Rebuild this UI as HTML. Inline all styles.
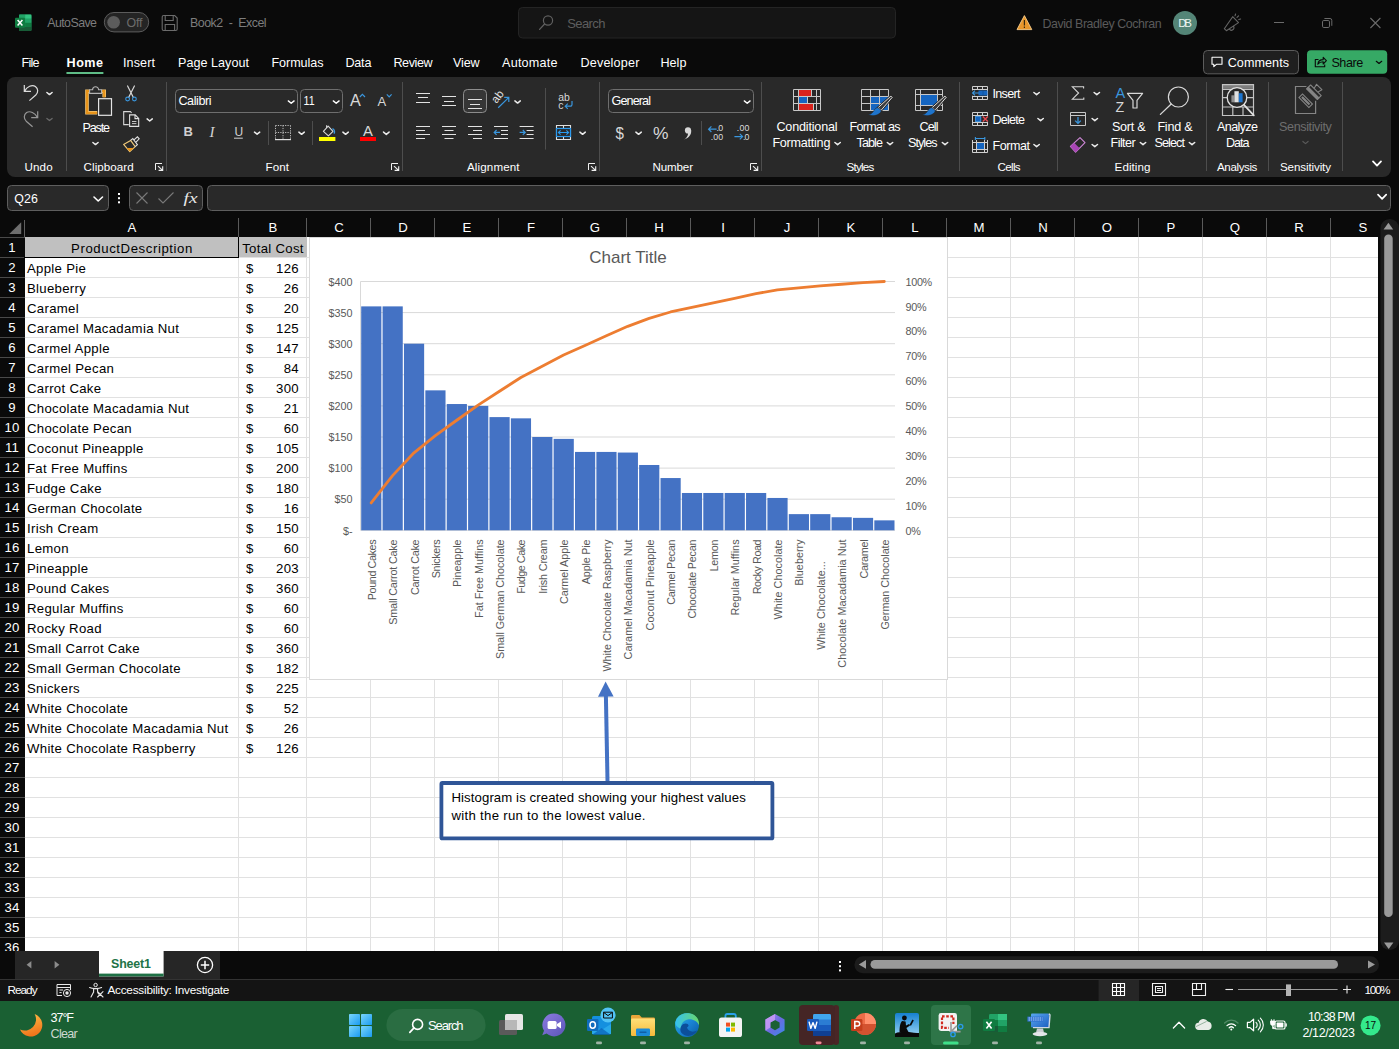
<!DOCTYPE html>
<html lang="en">
<head>
<meta charset="utf-8">
<title>Book2 - Excel</title>
<style>
*{box-sizing:border-box;margin:0;padding:0}
html,body{width:1399px;height:1049px;overflow:hidden;background:#0a0a0a}
body{font-family:"Liberation Sans",sans-serif;font-size:12px;color:#fff;position:relative}
.abs{position:absolute}
.t{position:absolute;white-space:nowrap;line-height:1}
svg{position:absolute;overflow:visible}
#titlebar{position:absolute;left:0;top:0;width:1399px;height:46px;background:#0a0a0a}
#tabs{position:absolute;left:0;top:46px;width:1399px;height:31px}
#ribbon{position:absolute;left:7px;top:77px;width:1384px;height:100px;background:#292929;border-radius:8px}
.rt{position:absolute;white-space:nowrap;line-height:1;font-size:12.4px;color:#fff}
.gl{position:absolute;white-space:nowrap;line-height:1;font-size:11.8px;color:#f0f0f0}
.sep{position:absolute;width:1px;background:#4a4a4a}
#sheet{position:absolute;left:0;top:218px;width:1378px;height:733px;background:#fff;overflow:hidden}
.ch{position:absolute;top:0;height:19px;color:#fff;font-size:13.2px;text-align:center;line-height:19px}
.rh{position:absolute;left:0;width:24px;height:20px;color:#fff;font-size:13.2px;text-align:center;line-height:20px;letter-spacing:0.2px}
.c{position:absolute;white-space:nowrap;color:#000;font-size:13.2px;line-height:20px;height:20px;letter-spacing:0.3px}
</style>
</head>
<body>
<svg style="left:0;top:0" width="1399" height="218" viewBox="0 0 1399 218" font-family="Liberation Sans, sans-serif">
<g><rect x="19" y="14.6" width="12.4" height="16.4" rx="1.4" fill="#21a366"/><rect x="19" y="14.6" width="6.2" height="4.1" fill="#21a366"/><rect x="25.2" y="14.6" width="6.2" height="4.1" fill="#33c481"/><rect x="19" y="18.7" width="6.2" height="4.1" fill="#107c41"/><rect x="25.2" y="18.7" width="6.2" height="4.1" fill="#21a366"/><rect x="19" y="22.8" width="6.2" height="4.1" fill="#185c37"/><rect x="25.2" y="22.8" width="6.2" height="4.1" fill="#107c41"/><rect x="19" y="26.9" width="12.4" height="4.1" fill="#185c37"/><rect x="15" y="17.8" width="10" height="10" rx="1" fill="#107c41"/><path d="M17.6 20 L22.4 25.6 M22.4 20 L17.6 25.6" stroke="#fff" stroke-width="1.5"/></g>
<text x="47.2" y="27.0" font-size="12.4" fill="#7d7d7d" textLength="49.8" lengthAdjust="spacing">AutoSave</text>
<rect x="104.3" y="12.5" width="44.4" height="19.4" fill="#242424" stroke="#5c5c5c" stroke-width="1" rx="9.7"/>
<circle cx="113.6" cy="22.3" r="6.3" fill="#5c5c5c"/>
<text x="126.4" y="26.8" font-size="12.4" fill="#6c6c6c" textLength="16.0" lengthAdjust="spacing">Off</text>
<path d="M162.2 17 a1.5 1.5 0 0 1 1.5 -1.5 h11 l2.5 2.5 v11 a1.5 1.5 0 0 1 -1.5 1.5 h-12 a1.5 1.5 0 0 1 -1.5 -1.5 z M165.2 15.5 v5 h8 v-5 M165.2 30.5 v-6 h9.4 v6" fill="none" stroke="#6c6c6c" stroke-width="1.1"/>
<text x="190.0" y="27.0" font-size="12.4" fill="#7d7d7d" textLength="76.6" lengthAdjust="spacing">Book2 &#160;-&#160; Excel</text>
<rect x="518.5" y="7.5" width="377" height="30.5" fill="#151515" stroke="#242424" stroke-width="1" rx="4"/>
<circle cx="548" cy="20.5" r="4.6" fill="none" stroke="#606060" stroke-width="1.2"/><path d="M544.6 24 L539.6 29.4" stroke="#606060" stroke-width="1.3" stroke-linecap="round"/>
<text x="567.2" y="27.6" font-size="13" fill="#5e5e5e" textLength="38.2" lengthAdjust="spacing">Search</text>
<path d="M1024.4 15.6 L1031.8 29.6 H1017 Z" fill="#e9972b" stroke="#f6cd8c" stroke-width="0.9" stroke-linejoin="round"/><path d="M1024.4 20 V25.4 M1024.4 26.6 V27.9" stroke="#3a2a10" stroke-width="1.2"/>
<text x="1042.4" y="27.8" font-size="12.4" fill="#5a5a5a" textLength="119.2" lengthAdjust="spacing">David Bradley Cochran</text>
<circle cx="1185" cy="23" r="12" fill="#548577"/>
<text x="1178.2" y="27.0" font-size="11.5" fill="#e8f4ee" textLength="13.6" lengthAdjust="spacing">DB</text>
<path d="M1224.3 28.7 L1232.7 16.7 L1238.5 22.6 L1226.4 30.7 Z M1229.4 29 a2.3 2.3 0 0 0 4.2 -2.6 M1235 15.8 l0.6 -1.8 M1237 17.4 l1.6 -1.6 M1238.8 19.6 l1.8 -0.6" fill="none" stroke="#666" stroke-width="1.1" stroke-linejoin="round" stroke-linecap="round"/>
<line x1="1274" y1="22.5" x2="1284" y2="22.5" stroke="#6a6a6a" stroke-width="1" stroke-linecap="butt"/>
<rect x="1322.5" y="20.5" width="7" height="7" rx="1.3" fill="none" stroke="#6a6a6a" stroke-width="1"/><path d="M1324.4 18.5 H1330 a1.8 1.8 0 0 1 1.8 1.8 V25.8" fill="none" stroke="#6a6a6a" stroke-width="1"/>
<path d="M1370.4 18 L1380.4 28 M1380.4 18 L1370.4 28" stroke="#6a6a6a" stroke-width="1.1"/>
<text x="21.4" y="67.0" font-size="12.6" fill="#fff" textLength="18.2" lengthAdjust="spacing">File</text>
<text x="123.0" y="67.0" font-size="12.6" fill="#fff" textLength="32.0" lengthAdjust="spacing">Insert</text>
<text x="178.0" y="67.0" font-size="12.6" fill="#fff" textLength="71.0" lengthAdjust="spacing">Page Layout</text>
<text x="271.4" y="67.0" font-size="12.6" fill="#fff" textLength="52.2" lengthAdjust="spacing">Formulas</text>
<text x="345.4" y="67.0" font-size="12.6" fill="#fff" textLength="26.0" lengthAdjust="spacing">Data</text>
<text x="393.4" y="67.0" font-size="12.6" fill="#fff" textLength="39.2" lengthAdjust="spacing">Review</text>
<text x="453.0" y="67.0" font-size="12.6" fill="#fff" textLength="26.6" lengthAdjust="spacing">View</text>
<text x="502.0" y="67.0" font-size="12.6" fill="#fff" textLength="55.6" lengthAdjust="spacing">Automate</text>
<text x="580.4" y="67.0" font-size="12.6" fill="#fff" textLength="59.0" lengthAdjust="spacing">Developer</text>
<text x="660.4" y="67.0" font-size="12.6" fill="#fff" textLength="26.0" lengthAdjust="spacing">Help</text>
<text x="66.6" y="67.0" font-size="12.6" fill="#fff" textLength="36.4" lengthAdjust="spacing" font-weight="bold">Home</text>
<rect x="66.2" y="72" width="37.4" height="2" fill="#5fbd87" rx="1"/>
<rect x="1203.5" y="50.5" width="95" height="23.3" fill="#1f1f1f" stroke="#5c5c5c" stroke-width="1" rx="4"/>
<path d="M1212 57.3 h10 v7 h-5.6 l-2.6 2.4 v-2.4 h-1.8 z" fill="none" stroke="#fff" stroke-width="1.1" stroke-linejoin="round"/>
<text x="1227.7" y="66.8" font-size="12.6" fill="#fff" textLength="61.3" lengthAdjust="spacing">Comments</text>
<rect x="1307" y="50.3" width="80.2" height="23.5" fill="#36a965" rx="4"/>
<path d="M1318.5 59.5 h-3.2 v7.3 h9.4 v-2.4 M1317.8 64.2 c0.4 -3 2.6 -4.6 5.4 -4.6 v-2.2 l3.2 3.3 l-3.2 3.3 v-2.2 c-2.2 0 -4 0.6 -5.4 2.4 z" fill="none" stroke="#0a0a0a" stroke-width="1.1" stroke-linejoin="round"/>
<text x="1331.4" y="66.8" font-size="12.6" fill="#0a0a0a" textLength="31.9" lengthAdjust="spacing">Share</text>
<path d="M1376.3 61.3 L1379.0 63.5 L1381.7 61.3" fill="none" stroke="#0a0a0a" stroke-width="1.2" stroke-linecap="round" stroke-linejoin="round"/>
<rect x="7" y="77" width="1384" height="100" fill="#292929" rx="8"/>
<path d="M24.3 85 V91.4 H31 M24.6 91.2 C27 86.6 32 84.2 35.4 86.4 C38.4 88.6 38.4 92.4 35.8 95 L29.4 100.6" fill="none" stroke="#dcdcdc" stroke-width="1.2" stroke-linecap="butt" stroke-linejoin="miter"/>
<path d="M46.9 92.5 L49.5 94.6 L52.1 92.5" fill="none" stroke="#ececec" stroke-width="1.5" stroke-linecap="round" stroke-linejoin="round"/>
<path d="M37.7 111.2 V117.7 H31.2 M37.4 117.4 C35 112.8 30 110.4 26.6 112.6 C23.6 114.8 23.6 118.6 26.2 121.2 L32.6 126.8" fill="none" stroke="#969696" stroke-width="1.2" stroke-linecap="butt" stroke-linejoin="miter"/>
<path d="M46.9 118.5 L49.5 120.6 L52.1 118.5" fill="none" stroke="#6a6a6a" stroke-width="1.3" stroke-linecap="round" stroke-linejoin="round"/>
<text x="24.4" y="171.0" font-size="11.6" fill="#fff" textLength="28.2" lengthAdjust="spacing">Undo</text>
<line x1="66.5" y1="82" x2="66.5" y2="171" stroke="#4d4d4d" stroke-width="1" stroke-linecap="butt"/>
<path d="M90 91.2 H87 V112.8 H97.2 M101.4 91.2 H104.2 V97.2" fill="none" stroke="#f6c878" stroke-width="3.6"/><path d="M90 91.2 H87 V112.8 H97.2 M101.4 91.2 H104.2 V97.2" fill="none" stroke="#e8941a" stroke-width="2.2"/>
<path d="M89.6 93.4 V89.8 H92.6 a3 3 0 0 1 6 0 H101.6 V93.4 Z" fill="#292929" stroke="#b4b4b4" stroke-width="1.1"/>
<rect x="98.6" y="98.7" width="12.9" height="16.6" fill="#292929" stroke="#e4e4e4" stroke-width="1.2"/>
<text x="82.4" y="132.0" font-size="12.6" fill="#fff" textLength="27.6" lengthAdjust="spacing">Paste</text>
<path d="M92.9 142.5 L95.5 144.6 L98.1 142.5" fill="none" stroke="#ececec" stroke-width="1.5" stroke-linecap="round" stroke-linejoin="round"/>
<path d="M127.6 86 L133.4 97.4 M134.4 86 L128.6 97.4" stroke="#d8d8d8" stroke-width="1.2" stroke-linecap="round"/><circle cx="127.6" cy="99" r="1.9" fill="none" stroke="#3a96dd" stroke-width="1.1"/><circle cx="134.4" cy="99" r="1.9" fill="none" stroke="#3a96dd" stroke-width="1.1"/>
<path d="M128.8 124.6 H123.7 V111.6 H130.4 L131.6 112.8" fill="none" stroke="#d8d8d8" stroke-width="1.1"/><path d="M129.6 114.9 H135.2 L138.7 118.4 V126.4 H129.6 Z M135 115 V118.6 H138.6" fill="none" stroke="#e0e0e0" stroke-width="1.1"/><path d="M132 121.5 H136.4 M132 123.6 H136.4" stroke="#d8d8d8" stroke-width="0.9"/>
<path d="M147.1 118.9 L149.7 121.0 L152.3 118.9" fill="none" stroke="#ececec" stroke-width="1.5" stroke-linecap="round" stroke-linejoin="round"/>
<path d="M123.6 144.4 L130.6 140.4 L135.2 146.6 L129.8 151.6 Z" fill="none" stroke="#f2cb7a" stroke-width="1.1" stroke-linejoin="round"/><path d="M126.6 148 L133.8 148 L129.8 151.4 Z" fill="#e8941a"/>
<path d="M130.6 140.4 L132.8 138.6 L137.4 144.6 L135.2 146.6" fill="none" stroke="#e0e0e0" stroke-width="1.1"/><path d="M134 139.8 L137.4 136.8 L139.2 138.8 L136 142.2" fill="none" stroke="#e0e0e0" stroke-width="1.1"/>
<text x="83.6" y="171.0" font-size="11.6" fill="#fff" textLength="50.0" lengthAdjust="spacing">Clipboard</text>
<path d="M155.5 170 V163.5 H162" fill="none" stroke="#f0f0f0" stroke-width="1"/><path d="M158 166.2 L162.4 170.2 M158.6 170.4 H162.7 V166.2" fill="none" stroke="#f0f0f0" stroke-width="1.1"/>
<line x1="166.5" y1="82" x2="166.5" y2="171" stroke="#4d4d4d" stroke-width="1" stroke-linecap="butt"/>
<rect x="175.5" y="89.5" width="122" height="23" fill="#292929" stroke="#6e6e6e" stroke-width="1" rx="4"/>
<text x="178.4" y="105.0" font-size="12.6" fill="#fff" textLength="33.2" lengthAdjust="spacing">Calibri</text>
<path d="M288.3 100.9 L291.2 103.3 L294.1 100.9" fill="none" stroke="#fff" stroke-width="1.4" stroke-linecap="round" stroke-linejoin="round"/>
<rect x="300.5" y="89.5" width="42" height="23" fill="#292929" stroke="#6e6e6e" stroke-width="1" rx="4"/>
<text x="303.6" y="105" font-size="12.6" fill="#fff" textLength="11" lengthAdjust="spacingAndGlyphs">11</text>
<path d="M333.3 100.9 L336.2 103.3 L339.1 100.9" fill="none" stroke="#fff" stroke-width="1.4" stroke-linecap="round" stroke-linejoin="round"/>
<text x="350.0" y="105.6" font-size="16.2" fill="#d8d8d8" textLength="11.0" lengthAdjust="spacing">A</text>
<path d="M359.8 97 L362.4 94.4 L365 97" fill="none" stroke="#3a96dd" stroke-width="1.2"/>
<text x="377.6" y="105.6" font-size="13" fill="#d8d8d8" textLength="9.4" lengthAdjust="spacing">A</text>
<path d="M386.8 94.4 L389.2 96.8 L391.6 94.4" fill="none" stroke="#3a96dd" stroke-width="1.2"/>
<text x="183.4" y="136.4" font-size="13" fill="#d0d0d0" textLength="7.6" lengthAdjust="spacing" font-weight="bold">B</text>
<text x="209.4" y="136.6" font-size="15" font-style="italic" font-family="Liberation Serif, serif" fill="#d4d4d4">I</text>
<text x="234.6" y="135.6" font-size="12" fill="#d0d0d0" textLength="7.8" lengthAdjust="spacing">U</text>
<line x1="234" y1="138.2" x2="242.8" y2="138.2" stroke="#d0d0d0" stroke-width="1" stroke-linecap="butt"/>
<path d="M254.5 132.1 L257.1 134.2 L259.7 132.1" fill="none" stroke="#ececec" stroke-width="1.5" stroke-linecap="round" stroke-linejoin="round"/>
<line x1="268.5" y1="121" x2="268.5" y2="145" stroke="#4d4d4d" stroke-width="1" stroke-linecap="butt"/>
<path d="M275.5 125.5 H290.5 M275.5 125.5 V139 M290.5 125.5 V139 M283 125.5 V139 M275.5 132.5 H290.5" fill="none" stroke="#bdbdbd" stroke-width="1" stroke-dasharray="1.2 1.2"/>
<line x1="275" y1="139.6" x2="291" y2="139.6" stroke="#e0e0e0" stroke-width="1.2" stroke-linecap="butt"/>
<path d="M298.9 132.1 L301.6 134.3 L304.3 132.1" fill="none" stroke="#ececec" stroke-width="1.5" stroke-linecap="round" stroke-linejoin="round"/>
<line x1="312.5" y1="121" x2="312.5" y2="145" stroke="#4d4d4d" stroke-width="1" stroke-linecap="butt"/>
<path d="M323.4 131.4 L328.2 126.2 L333 131.4 L328.4 135.8 Z M326.6 127.6 V125.2" fill="none" stroke="#d8d8d8" stroke-width="1.1" stroke-linejoin="round"/><path d="M332.4 128.6 C334.6 129.6 335 132 334 133.6" fill="none" stroke="#3a96dd" stroke-width="1.4"/>
<rect x="319" y="137" width="16.4" height="4" fill="#ffff00"/>
<path d="M342.9 132.1 L345.6 134.3 L348.3 132.1" fill="none" stroke="#ececec" stroke-width="1.5" stroke-linecap="round" stroke-linejoin="round"/>
<text x="363.0" y="136.0" font-size="14.8" fill="#d8d8d8" textLength="10.0" lengthAdjust="spacing">A</text>
<rect x="360" y="137" width="16" height="4" fill="#ff0000"/>
<path d="M383.5 132.1 L386.3 134.4 L389.1 132.1" fill="none" stroke="#ececec" stroke-width="1.5" stroke-linecap="round" stroke-linejoin="round"/>
<text x="265.6" y="171.0" font-size="11.6" fill="#fff" textLength="23.4" lengthAdjust="spacing">Font</text>
<path d="M391.5 170 V163.5 H398" fill="none" stroke="#f0f0f0" stroke-width="1"/><path d="M394 166.2 L398.4 170.2 M394.6 170.4 H398.7 V166.2" fill="none" stroke="#f0f0f0" stroke-width="1.1"/>
<line x1="402.5" y1="82" x2="402.5" y2="171" stroke="#4d4d4d" stroke-width="1" stroke-linecap="butt"/>
<line x1="416" y1="93.5" x2="430" y2="93.5" stroke="#e2e2e2" stroke-width="1" stroke-linecap="butt"/>
<line x1="418" y1="97.5" x2="428" y2="97.5" stroke="#e2e2e2" stroke-width="1" stroke-linecap="butt"/>
<line x1="416" y1="102.5" x2="430" y2="102.5" stroke="#e2e2e2" stroke-width="1" stroke-linecap="butt"/>
<line x1="442" y1="96.5" x2="456" y2="96.5" stroke="#e2e2e2" stroke-width="1" stroke-linecap="butt"/>
<line x1="444" y1="101.5" x2="454" y2="101.5" stroke="#e2e2e2" stroke-width="1" stroke-linecap="butt"/>
<line x1="442" y1="105.5" x2="456" y2="105.5" stroke="#e2e2e2" stroke-width="1" stroke-linecap="butt"/>
<rect x="463.5" y="89.5" width="23" height="23" fill="#363636" stroke="#8c8c8c" stroke-width="1" rx="4"/>
<line x1="468" y1="99.5" x2="482" y2="99.5" stroke="#e2e2e2" stroke-width="1" stroke-linecap="butt"/>
<line x1="470" y1="104.5" x2="480" y2="104.5" stroke="#e2e2e2" stroke-width="1" stroke-linecap="butt"/>
<line x1="468" y1="108.5" x2="482" y2="108.5" stroke="#e2e2e2" stroke-width="1" stroke-linecap="butt"/>
<text transform="translate(496.6 104) rotate(-52)" font-size="11.4" fill="#e0e0e0">ab</text>
<path d="M498.2 107.8 L508.6 97.6 M504.2 97.4 H508.8 V102" fill="none" stroke="#3a96dd" stroke-width="1.2"/>
<path d="M514.9 100.9 L517.6 103.1 L520.3 100.9" fill="none" stroke="#ececec" stroke-width="1.5" stroke-linecap="round" stroke-linejoin="round"/>
<line x1="416" y1="126.5" x2="430" y2="126.5" stroke="#e2e2e2" stroke-width="1" stroke-linecap="butt"/>
<line x1="416" y1="130.5" x2="425" y2="130.5" stroke="#e2e2e2" stroke-width="1" stroke-linecap="butt"/>
<line x1="416" y1="134.5" x2="430" y2="134.5" stroke="#e2e2e2" stroke-width="1" stroke-linecap="butt"/>
<line x1="416" y1="138.5" x2="425" y2="138.5" stroke="#e2e2e2" stroke-width="1" stroke-linecap="butt"/>
<line x1="442" y1="126.5" x2="456" y2="126.5" stroke="#e2e2e2" stroke-width="1" stroke-linecap="butt"/>
<line x1="444.5" y1="130.5" x2="453.5" y2="130.5" stroke="#e2e2e2" stroke-width="1" stroke-linecap="butt"/>
<line x1="442" y1="134.5" x2="456" y2="134.5" stroke="#e2e2e2" stroke-width="1" stroke-linecap="butt"/>
<line x1="444.5" y1="138.5" x2="453.5" y2="138.5" stroke="#e2e2e2" stroke-width="1" stroke-linecap="butt"/>
<line x1="468" y1="126.5" x2="482" y2="126.5" stroke="#e2e2e2" stroke-width="1" stroke-linecap="butt"/>
<line x1="473" y1="130.5" x2="482" y2="130.5" stroke="#e2e2e2" stroke-width="1" stroke-linecap="butt"/>
<line x1="468" y1="134.5" x2="482" y2="134.5" stroke="#e2e2e2" stroke-width="1" stroke-linecap="butt"/>
<line x1="473" y1="138.5" x2="482" y2="138.5" stroke="#e2e2e2" stroke-width="1" stroke-linecap="butt"/>
<line x1="494" y1="126.5" x2="508" y2="126.5" stroke="#e2e2e2" stroke-width="1" stroke-linecap="butt"/>
<line x1="501" y1="130.5" x2="508" y2="130.5" stroke="#e2e2e2" stroke-width="1" stroke-linecap="butt"/>
<line x1="501" y1="134.5" x2="508" y2="134.5" stroke="#e2e2e2" stroke-width="1" stroke-linecap="butt"/>
<line x1="494" y1="138.5" x2="508" y2="138.5" stroke="#e2e2e2" stroke-width="1" stroke-linecap="butt"/>
<path d="M494.4 132.4 H500 M496.6 130 L494.2 132.4 L496.6 134.8" fill="none" stroke="#3a96dd" stroke-width="1.2"/>
<line x1="519.6" y1="126.5" x2="533.6" y2="126.5" stroke="#e2e2e2" stroke-width="1" stroke-linecap="butt"/>
<line x1="526.6" y1="130.5" x2="533.6" y2="130.5" stroke="#e2e2e2" stroke-width="1" stroke-linecap="butt"/>
<line x1="526.6" y1="134.5" x2="533.6" y2="134.5" stroke="#e2e2e2" stroke-width="1" stroke-linecap="butt"/>
<line x1="519.6" y1="138.5" x2="533.6" y2="138.5" stroke="#e2e2e2" stroke-width="1" stroke-linecap="butt"/>
<path d="M519.6 132.4 H525.2 M522.8 130 L525.2 132.4 L522.8 134.8" fill="none" stroke="#3a96dd" stroke-width="1.2"/>
<line x1="545.5" y1="88" x2="545.5" y2="149.6" stroke="#4d4d4d" stroke-width="1" stroke-linecap="butt"/>
<text x="558.2" y="101" font-size="10.4" fill="#d8d8d8" textLength="11.6" lengthAdjust="spacingAndGlyphs">ab</text>
<text x="558.2" y="108.8" font-size="10.4" fill="#d8d8d8">c</text>
<path d="M572 101 V104.6 a1.6 1.6 0 0 1 -1.6 1.6 H565.4 M567.8 103.6 L565.2 106.2 L567.8 108.8" fill="none" stroke="#3a96dd" stroke-width="1.2"/>
<path d="M556.5 125.5 H570.5 V139.5 H556.5 Z M563.5 125.5 V128.5 M563.5 136.5 V139.5" fill="none" stroke="#e0e0e0" stroke-width="1.1"/>
<rect x="556.5" y="128.5" width="14" height="8" fill="#292929" stroke="#2b9bf0" stroke-width="1.2"/>
<path d="M558.6 132.5 H568.4 M560.6 130.4 L558.4 132.5 L560.6 134.6 M566.4 130.4 L568.6 132.5 L566.4 134.6" fill="none" stroke="#2b9bf0" stroke-width="1.1"/>
<path d="M579.9 132.1 L582.6 134.3 L585.3 132.1" fill="none" stroke="#ececec" stroke-width="1.5" stroke-linecap="round" stroke-linejoin="round"/>
<text x="467.0" y="171.0" font-size="11.6" fill="#fff" textLength="52.6" lengthAdjust="spacing">Alignment</text>
<path d="M588.5 170 V163.5 H595" fill="none" stroke="#f0f0f0" stroke-width="1"/><path d="M591 166.2 L595.4 170.2 M591.6 170.4 H595.7 V166.2" fill="none" stroke="#f0f0f0" stroke-width="1.1"/>
<line x1="599.5" y1="82" x2="599.5" y2="171" stroke="#4d4d4d" stroke-width="1" stroke-linecap="butt"/>
<rect x="608.5" y="89.5" width="145" height="23" fill="#292929" stroke="#6e6e6e" stroke-width="1" rx="4"/>
<text x="611.6" y="105.0" font-size="12.6" fill="#fff" textLength="39.4" lengthAdjust="spacing">General</text>
<path d="M744.3 100.9 L747.2 103.3 L750.1 100.9" fill="none" stroke="#fff" stroke-width="1.4" stroke-linecap="round" stroke-linejoin="round"/>
<text x="615.4" y="139" font-size="17" fill="#d8d8d8" textLength="8.4" lengthAdjust="spacingAndGlyphs">$</text>
<path d="M635.9 132.1 L638.6 134.3 L641.3 132.1" fill="none" stroke="#ececec" stroke-width="1.5" stroke-linecap="round" stroke-linejoin="round"/>
<text x="653.0" y="138.8" font-size="17.4" fill="#d8d8d8" textLength="15.4" lengthAdjust="spacing">%</text>
<circle cx="688" cy="130.4" r="3.1" fill="#d8d8d8"/><path d="M691.1 130 C691.8 134.6 689 137.8 684.2 139.6 C686.8 137.6 688.2 135.6 688 133.2 Z" fill="#d8d8d8"/>
<line x1="701.5" y1="121" x2="701.5" y2="145" stroke="#4d4d4d" stroke-width="1" stroke-linecap="butt"/>
<text x="716.4" y="131.0" font-size="8.8" fill="#dcdcdc" textLength="6.8" lengthAdjust="spacing">.0</text>
<text x="710.8" y="140.0" font-size="8.8" fill="#dcdcdc" textLength="12.4" lengthAdjust="spacing">.00</text>
<path d="M708.6 129.2 H716.6 M711.4 126.4 L708.6 129.2 L711.4 132" fill="none" stroke="#3a96dd" stroke-width="1.2"/>
<text x="736.8" y="131.0" font-size="8.8" fill="#dcdcdc" textLength="12.6" lengthAdjust="spacing">.00</text>
<text x="743.0" y="140.0" font-size="8.8" fill="#dcdcdc" textLength="6.4" lengthAdjust="spacing">.0</text>
<path d="M734.4 136.6 H742.6 M739.8 133.8 L742.6 136.6 L739.8 139.4" fill="none" stroke="#3a96dd" stroke-width="1.2"/>
<text x="652.4" y="171.0" font-size="11.6" fill="#fff" textLength="40.6" lengthAdjust="spacing">Number</text>
<path d="M750.5 170 V163.5 H757" fill="none" stroke="#f0f0f0" stroke-width="1"/><path d="M753 166.2 L757.4 170.2 M753.6 170.4 H757.7 V166.2" fill="none" stroke="#f0f0f0" stroke-width="1.1"/>
<line x1="761.5" y1="82" x2="761.5" y2="171" stroke="#4d4d4d" stroke-width="1" stroke-linecap="butt"/>
<rect x="798.5" y="89.5" width="13" height="7" fill="#d9231c"/>
<rect x="798.5" y="96.5" width="9" height="7" fill="#1565c0"/>
<rect x="798.5" y="103.5" width="15" height="7" fill="#d9231c"/>
<path d="M793.5 89.5 H820.5 V110.5 H793.5 Z M793.5 96.5 H820.5 M793.5 103.5 H820.5 M798.5 89.5 V110.5 M811.5 89.5 V96.5 M807.5 96.5 V103.5 M813.5 103.5 V110.5 M816.5 89.5 V110.5" fill="none" stroke="#c8c8c8" stroke-width="1"/>
<text x="776.4" y="131.0" font-size="12.6" fill="#fff" textLength="61.2" lengthAdjust="spacing">Conditional</text>
<text x="772.4" y="147.0" font-size="12.6" fill="#fff" textLength="58.0" lengthAdjust="spacing">Formatting</text>
<path d="M834.9 142.5 L837.6 144.7 L840.3 142.5" fill="none" stroke="#ececec" stroke-width="1.5" stroke-linecap="round" stroke-linejoin="round"/>
<rect x="870.5" y="96.5" width="18.5" height="14" fill="#1565c0"/>
<path d="M861.5 89.5 H888.5 V110.5 H861.5 Z M861.5 96.5 H888.5 M861.5 103.5 H888.5 M870.5 89.5 V110.5 M879.5 89.5 V110.5" fill="none" stroke="#c8c8c8" stroke-width="1"/>
<path d="M890.9 96.1 L892.2 97.4 L881 110.4 L878.2 107.6 Z" fill="#292929" stroke="#292929" stroke-width="2.4" stroke-linejoin="round"/><path d="M890.9 96.1 L892.2 97.4 L881 110.4 L878.2 107.6 Z" fill="#3a3a3a" stroke="#dcdcdc" stroke-width="1" stroke-linejoin="round"/><path d="M877.8 107.4 C874.6 107.8 874 111.2 872 113 C871 114 869.6 114.4 868.4 114.2 C871.6 116.6 877.6 116 880.4 112.6 C881.4 111.2 881.4 110.4 881 110.2 Z" fill="#1e74cc" stroke="#292929" stroke-width="0.6"/>
<text x="849.4" y="131.0" font-size="12.6" fill="#fff" textLength="51.2" lengthAdjust="spacing">Format as</text>
<text x="856.6" y="147.0" font-size="12.6" fill="#fff" textLength="26.4" lengthAdjust="spacing">Table</text>
<path d="M887.3 142.5 L890.0 144.7 L892.7 142.5" fill="none" stroke="#ececec" stroke-width="1.5" stroke-linecap="round" stroke-linejoin="round"/>
<rect x="920.5" y="94.5" width="17" height="11" fill="#1565c0"/>
<path d="M915.5 89.5 H942.5 V110.5 H915.5 Z M915.5 94.5 H942.5 M915.5 105.5 H942.5 M920.5 89.5 V110.5 M937.5 89.5 V110.5" fill="none" stroke="#c8c8c8" stroke-width="1"/>
<path d="M944.9 96.1 L946.2 97.4 L935 110.4 L932.2 107.6 Z" fill="#292929" stroke="#292929" stroke-width="2.4" stroke-linejoin="round"/><path d="M944.9 96.1 L946.2 97.4 L935 110.4 L932.2 107.6 Z" fill="#3a3a3a" stroke="#dcdcdc" stroke-width="1" stroke-linejoin="round"/><path d="M931.8 107.4 C928.6 107.8 928 111.2 926 113 C925 114 923.6 114.4 922.4 114.2 C925.6 116.6 931.6 116 934.4 112.6 C935.4 111.2 935.4 110.4 935 110.2 Z" fill="#1e74cc" stroke="#292929" stroke-width="0.6"/>
<text x="919.4" y="131.0" font-size="12.6" fill="#fff" textLength="19.2" lengthAdjust="spacing">Cell</text>
<text x="908.0" y="147.0" font-size="12.6" fill="#fff" textLength="29.6" lengthAdjust="spacing">Styles</text>
<path d="M942.3 142.5 L945.0 144.7 L947.7 142.5" fill="none" stroke="#ececec" stroke-width="1.5" stroke-linecap="round" stroke-linejoin="round"/>
<text x="846.4" y="171.0" font-size="11.6" fill="#fff" textLength="28.0" lengthAdjust="spacing">Styles</text>
<line x1="959.5" y1="82" x2="959.5" y2="171" stroke="#4d4d4d" stroke-width="1" stroke-linecap="butt"/>
<path d="M972.5 86.5 H987.5 V99.5 H972.5 Z M972.5 89.5 H987.5 M972.5 96.5 H987.5 M977.5 86.5 V89.5 M982.5 86.5 V89.5 M977.5 96.5 V99.5 M982.5 96.5 V99.5" fill="none" stroke="#d0d0d0" stroke-width="1"/>
<rect x="971.6" y="90.4" width="6" height="5.4" fill="#292929"/>
<rect x="978.5" y="90.5" width="9" height="5" fill="#1565c0"/>
<line x1="983" y1="90.5" x2="983" y2="95.5" stroke="#0f4f94" stroke-width="0.8" stroke-linecap="butt"/>
<path d="M972.6 93 H979.4 M975 90.6 L972.6 93 L975 95.4" fill="none" stroke="#3a96dd" stroke-width="1.2"/>
<text x="992.4" y="98.0" font-size="12.6" fill="#fff" textLength="28.2" lengthAdjust="spacing">Insert</text>
<path d="M1033.9 92.5 L1036.6 94.7 L1039.3 92.5" fill="none" stroke="#ececec" stroke-width="1.5" stroke-linecap="round" stroke-linejoin="round"/>
<path d="M972.5 112.5 H987.5 V125.5 H972.5 Z M972.5 115.5 H987.5 M972.5 122.5 H987.5 M977.5 112.5 V115.5 M982.5 112.5 V115.5 M977.5 122.5 V125.5 M982.5 122.5 V125.5" fill="none" stroke="#d0d0d0" stroke-width="1"/>
<rect x="974.6" y="116.2" width="14" height="5.6" fill="#292929"/>
<rect x="975.6" y="116.6" width="5.2" height="4.9" fill="#1565c0" stroke="#4aa3ee" stroke-width="0.8"/>
<path d="M982.8 116.6 L987.8 121.6 M987.8 116.6 L982.8 121.6" stroke="#e8484f" stroke-width="1.4"/>
<text x="992.4" y="124.0" font-size="12.6" fill="#fff" textLength="32.6" lengthAdjust="spacing">Delete</text>
<path d="M1037.9 118.5 L1040.6 120.7 L1043.3 118.5" fill="none" stroke="#ececec" stroke-width="1.5" stroke-linecap="round" stroke-linejoin="round"/>
<path d="M972.5 140 V152.5 H987.5 V140 M972.5 142.5 H987.5 M972.5 149.5 H987.5 M976.5 140 V152.5 M984.5 140 V152.5" fill="none" stroke="#d0d0d0" stroke-width="1"/>
<rect x="977" y="143" width="7" height="6" fill="#1565c0"/>
<path d="M975.4 138.5 H984.8 M975.4 137 V140 M984.8 137 V140" fill="none" stroke="#3a96dd" stroke-width="1.1"/>
<text x="992.4" y="150.0" font-size="12.6" fill="#fff" textLength="37.6" lengthAdjust="spacing">Format</text>
<path d="M1033.9 144.5 L1036.6 146.7 L1039.3 144.5" fill="none" stroke="#ececec" stroke-width="1.5" stroke-linecap="round" stroke-linejoin="round"/>
<text x="997.6" y="171.0" font-size="11.6" fill="#fff" textLength="23.0" lengthAdjust="spacing">Cells</text>
<line x1="1057.5" y1="82" x2="1057.5" y2="171" stroke="#4d4d4d" stroke-width="1" stroke-linecap="butt"/>
<path d="M1083.6 88.6 V86.8 H1072.4 L1078.6 93 L1072.4 99.2 H1083.8 V97.4" fill="none" stroke="#d8d8d8" stroke-width="1.1" stroke-linejoin="miter"/>
<path d="M1094.1 92.5 L1096.8 94.7 L1099.5 92.5" fill="none" stroke="#ececec" stroke-width="1.5" stroke-linecap="round" stroke-linejoin="round"/>
<path d="M1070.5 112.5 H1085.5 V125.5 H1070.5 Z M1070.5 115.5 H1085.5" fill="none" stroke="#c8c8c8" stroke-width="1"/><path d="M1078 117 V123.4 M1075.2 120.6 L1078 123.4 L1080.8 120.6" fill="none" stroke="#3a96dd" stroke-width="1.3"/>
<path d="M1092.1 118.5 L1094.8 120.7 L1097.5 118.5" fill="none" stroke="#ececec" stroke-width="1.5" stroke-linecap="round" stroke-linejoin="round"/>
<path d="M1070.4 146.4 L1080 137.6 L1085 142.6 L1075.6 152.2 Z" fill="none" stroke="#cf87d8" stroke-width="1.1" stroke-linejoin="round"/><path d="M1070.4 146.4 L1074.2 142.8 L1079.6 148.2 L1075.6 152.2 Z" fill="#a945b5"/>
<path d="M1092.1 144.5 L1094.8 146.7 L1097.5 144.5" fill="none" stroke="#ececec" stroke-width="1.5" stroke-linecap="round" stroke-linejoin="round"/>
<text x="1115.4" y="98.4" font-size="14.6" fill="#3a96dd" textLength="9.6" lengthAdjust="spacing">A</text>
<text x="1115.6" y="112.4" font-size="14.2" fill="#d8d8d8" textLength="8.4" lengthAdjust="spacing">Z</text>
<path d="M1127.4 93.4 H1142.6 L1137 100.4 V108 H1133 V100.4 Z" fill="none" stroke="#d8d8d8" stroke-width="1.2" stroke-linejoin="round"/>
<text x="1112.0" y="131.0" font-size="12.6" fill="#fff" textLength="33.6" lengthAdjust="spacing">Sort &amp;</text>
<text x="1110.6" y="147.0" font-size="12.6" fill="#fff" textLength="25.0" lengthAdjust="spacing">Filter</text>
<path d="M1140.3 142.5 L1143.0 144.7 L1145.7 142.5" fill="none" stroke="#ececec" stroke-width="1.5" stroke-linecap="round" stroke-linejoin="round"/>
<circle cx="1178.4" cy="97" r="10" fill="none" stroke="#d8d8d8" stroke-width="1.2"/><path d="M1171.2 104 L1160.4 114.4" stroke="#d8d8d8" stroke-width="1.3" stroke-linecap="round"/>
<text x="1157.4" y="131.0" font-size="12.6" fill="#fff" textLength="35.2" lengthAdjust="spacing">Find &amp;</text>
<text x="1154.4" y="147.0" font-size="12.6" fill="#fff" textLength="30.6" lengthAdjust="spacing">Select</text>
<path d="M1189.3 142.5 L1192.0 144.7 L1194.7 142.5" fill="none" stroke="#ececec" stroke-width="1.5" stroke-linecap="round" stroke-linejoin="round"/>
<text x="1114.6" y="171.0" font-size="11.6" fill="#fff" textLength="35.8" lengthAdjust="spacing">Editing</text>
<line x1="1206.5" y1="82" x2="1206.5" y2="171" stroke="#4d4d4d" stroke-width="1" stroke-linecap="butt"/>
<rect x="1222.5" y="85" width="31" height="3.6" fill="#7e7e7e"/>
<path d="M1222.5 84.7 H1253.5 V115.5 H1222.5 Z M1222.5 89.3 H1253.5 M1222.5 97.7 H1253.5 M1222.5 107 H1253.5 M1232.8 107 V115.5 M1243 107 V115.5 M1232.8 89.3 V97.7 M1243 89.3 V97.7" fill="none" stroke="#c4c4c4" stroke-width="1.2"/>
<circle cx="1237" cy="97.5" r="9.8" fill="#292929" stroke="#e2e2e2" stroke-width="1.3"/>
<rect x="1231.4" y="95.3" width="3" height="7" fill="#8e8e8e"/>
<rect x="1234.4" y="91.2" width="4.4" height="11.1" fill="#e0e0e0"/>
<rect x="1238.8" y="93.2" width="3.8" height="9.1" fill="#1b75d0"/>
<path d="M1244 104.8 L1253.8 115.4" stroke="#e2e2e2" stroke-width="1.7" stroke-linecap="round"/>
<text x="1217.0" y="131.0" font-size="12.6" fill="#fff" textLength="41.0" lengthAdjust="spacing">Analyze</text>
<text x="1226.0" y="147.0" font-size="12.6" fill="#fff" textLength="23.6" lengthAdjust="spacing">Data</text>
<text x="1217.0" y="171.0" font-size="11.6" fill="#fff" textLength="40.4" lengthAdjust="spacing">Analysis</text>
<line x1="1268.5" y1="82" x2="1268.5" y2="171" stroke="#4d4d4d" stroke-width="1" stroke-linecap="butt"/>
<path d="M1306.4 86.5 H1295.5 V113.5 H1315.6 V100.8" fill="none" stroke="#858585" stroke-width="1.2"/>
<g transform="translate(1314 92.2) rotate(45)" fill="none" stroke="#858585" stroke-width="1.1" stroke-linejoin="round"><rect x="-7.5" y="-2.7" width="15" height="5.4"/><rect x="-7.5" y="0.5" width="15" height="2.3" fill="#858585"/><path d="M-2.6 -2.7 L-3.8 -7.4 H3.8 L2.6 -2.7"/></g>
<g transform="translate(1305.7 100.7) rotate(45)" fill="none" stroke="#858585" stroke-width="1.1"><rect x="-7" y="-2.5" width="14" height="5"/><rect x="-4.8" y="-0.5" width="9.6" height="1" fill="#858585"/></g>
<text x="1279.0" y="130.6" font-size="12.6" fill="#6e6e6e" textLength="52.8" lengthAdjust="spacing">Sensitivity</text>
<path d="M1302.9 141.5 L1305.5 143.6 L1308.1 141.5" fill="none" stroke="#5a5a5a" stroke-width="1.2" stroke-linecap="round" stroke-linejoin="round"/>
<text x="1280.0" y="171.0" font-size="11.6" fill="#fff" textLength="51.0" lengthAdjust="spacing">Sensitivity</text>
<line x1="1342.5" y1="82" x2="1342.5" y2="171" stroke="#4d4d4d" stroke-width="1" stroke-linecap="butt"/>
<path d="M1373.0 161.4 L1377.0 165.6 L1381.0 161.4" fill="none" stroke="#fff" stroke-width="1.8" stroke-linecap="round" stroke-linejoin="round"/>

<rect x="7.5" y="185.5" width="101" height="25" fill="#292929" stroke="#5e5e5e" stroke-width="1" rx="4"/>
<text x="14.2" y="203.0" font-size="12.4" fill="#fff" textLength="23.8" lengthAdjust="spacing">Q26</text>
<path d="M94.0 197.0 L98.2 201.0 L102.5 197.0" fill="none" stroke="#fff" stroke-width="1.6" stroke-linecap="round" stroke-linejoin="round"/>
<rect x="118" y="193" width="2" height="2" fill="#fff"/><rect x="118" y="197.2" width="2" height="2" fill="#fff"/><rect x="118" y="201.3" width="2" height="2" fill="#fff"/>
<rect x="129.5" y="185.5" width="73" height="25" fill="#292929" stroke="#5e5e5e" stroke-width="1" rx="4"/>
<path d="M136.5 192.5 L147.5 203.5 M147.5 192.5 L136.5 203.5" stroke="#7a7a7a" stroke-width="1.1"/>
<path d="M158.5 198.5 L163 203 L173.5 192.5" fill="none" stroke="#7a7a7a" stroke-width="1.1"/>
<text x="183.5" y="203.4" font-size="15" font-style="italic" font-family="Liberation Serif, serif" fill="#e8e8e8" textLength="14" lengthAdjust="spacingAndGlyphs">fx</text>
<rect x="207.5" y="185.5" width="1183" height="25" fill="#292929" stroke="#5e5e5e" stroke-width="1" rx="4"/>
<path d="M1378.0 194.6 L1382.1 198.8 L1386.2 194.6" fill="none" stroke="#fff" stroke-width="1.7" stroke-linecap="round" stroke-linejoin="round"/>
</svg>
<div id="sheet">
<div class="abs" style="left:0;top:0;width:1378px;height:19px;background:#0a0a0a"></div>
<div class="abs" style="left:0;top:19px;width:25px;height:714px;background:#0a0a0a"></div>
<div class="abs" style="left:24px;top:2px;width:1px;height:18px;background:#5e5e5e"></div>
<div class="abs" style="left:0;top:19px;width:25px;height:1px;background:#4a4a4a"></div>
<svg style="left:9px;top:4px" width="13" height="13" viewBox="0 0 13 13"><path d="M12.2 0.2V12H0.2Z" fill="#6e6e6e"/></svg>
<div class="ch" style="left:25px;width:214px">A</div>
<div class="abs" style="left:238px;top:0px;width:1px;height:19px;background:#5a5a5a"></div>
<div class="ch" style="left:239px;width:68px">B</div>
<div class="abs" style="left:306px;top:0px;width:1px;height:19px;background:#5a5a5a"></div>
<div class="ch" style="left:307px;width:64px">C</div>
<div class="abs" style="left:370px;top:0px;width:1px;height:19px;background:#5a5a5a"></div>
<div class="ch" style="left:371px;width:64px">D</div>
<div class="abs" style="left:434px;top:0px;width:1px;height:19px;background:#5a5a5a"></div>
<div class="ch" style="left:435px;width:64px">E</div>
<div class="abs" style="left:498px;top:0px;width:1px;height:19px;background:#5a5a5a"></div>
<div class="ch" style="left:499px;width:64px">F</div>
<div class="abs" style="left:562px;top:0px;width:1px;height:19px;background:#5a5a5a"></div>
<div class="ch" style="left:563px;width:64px">G</div>
<div class="abs" style="left:626px;top:0px;width:1px;height:19px;background:#5a5a5a"></div>
<div class="ch" style="left:627px;width:64px">H</div>
<div class="abs" style="left:690px;top:0px;width:1px;height:19px;background:#5a5a5a"></div>
<div class="ch" style="left:691px;width:64px">I</div>
<div class="abs" style="left:754px;top:0px;width:1px;height:19px;background:#5a5a5a"></div>
<div class="ch" style="left:755px;width:64px">J</div>
<div class="abs" style="left:818px;top:0px;width:1px;height:19px;background:#5a5a5a"></div>
<div class="ch" style="left:819px;width:64px">K</div>
<div class="abs" style="left:882px;top:0px;width:1px;height:19px;background:#5a5a5a"></div>
<div class="ch" style="left:883px;width:64px">L</div>
<div class="abs" style="left:946px;top:0px;width:1px;height:19px;background:#5a5a5a"></div>
<div class="ch" style="left:947px;width:64px">M</div>
<div class="abs" style="left:1010px;top:0px;width:1px;height:19px;background:#5a5a5a"></div>
<div class="ch" style="left:1011px;width:64px">N</div>
<div class="abs" style="left:1074px;top:0px;width:1px;height:19px;background:#5a5a5a"></div>
<div class="ch" style="left:1075px;width:64px">O</div>
<div class="abs" style="left:1138px;top:0px;width:1px;height:19px;background:#5a5a5a"></div>
<div class="ch" style="left:1139px;width:64px">P</div>
<div class="abs" style="left:1202px;top:0px;width:1px;height:19px;background:#5a5a5a"></div>
<div class="ch" style="left:1203px;width:64px">Q</div>
<div class="abs" style="left:1266px;top:0px;width:1px;height:19px;background:#5a5a5a"></div>
<div class="ch" style="left:1267px;width:64px">R</div>
<div class="abs" style="left:1330px;top:0px;width:1px;height:19px;background:#5a5a5a"></div>
<div class="ch" style="left:1331px;width:64px">S</div>
<div class="abs" style="left:1394px;top:0px;width:1px;height:19px;background:#5a5a5a"></div>
<div class="abs" style="left:238px;top:19px;width:1px;height:714px;background:#e1e1e1"></div>
<div class="abs" style="left:306px;top:19px;width:1px;height:714px;background:#e1e1e1"></div>
<div class="abs" style="left:370px;top:19px;width:1px;height:714px;background:#e1e1e1"></div>
<div class="abs" style="left:434px;top:19px;width:1px;height:714px;background:#e1e1e1"></div>
<div class="abs" style="left:498px;top:19px;width:1px;height:714px;background:#e1e1e1"></div>
<div class="abs" style="left:562px;top:19px;width:1px;height:714px;background:#e1e1e1"></div>
<div class="abs" style="left:626px;top:19px;width:1px;height:714px;background:#e1e1e1"></div>
<div class="abs" style="left:690px;top:19px;width:1px;height:714px;background:#e1e1e1"></div>
<div class="abs" style="left:754px;top:19px;width:1px;height:714px;background:#e1e1e1"></div>
<div class="abs" style="left:818px;top:19px;width:1px;height:714px;background:#e1e1e1"></div>
<div class="abs" style="left:882px;top:19px;width:1px;height:714px;background:#e1e1e1"></div>
<div class="abs" style="left:946px;top:19px;width:1px;height:714px;background:#e1e1e1"></div>
<div class="abs" style="left:1010px;top:19px;width:1px;height:714px;background:#e1e1e1"></div>
<div class="abs" style="left:1074px;top:19px;width:1px;height:714px;background:#e1e1e1"></div>
<div class="abs" style="left:1138px;top:19px;width:1px;height:714px;background:#e1e1e1"></div>
<div class="abs" style="left:1202px;top:19px;width:1px;height:714px;background:#e1e1e1"></div>
<div class="abs" style="left:1266px;top:19px;width:1px;height:714px;background:#e1e1e1"></div>
<div class="abs" style="left:1330px;top:19px;width:1px;height:714px;background:#e1e1e1"></div>
<div class="abs" style="left:1394px;top:19px;width:1px;height:714px;background:#e1e1e1"></div>
<div class="abs" style="left:1458px;top:19px;width:1px;height:714px;background:#e1e1e1"></div>
<div class="rh" style="top:20px">1</div>
<div class="abs" style="left:25px;top:39px;width:1353px;height:1px;background:#e1e1e1"></div>
<div class="abs" style="left:0;top:39px;width:25px;height:1px;background:#4a4a4a"></div>
<div class="rh" style="top:40px">2</div>
<div class="abs" style="left:25px;top:59px;width:1353px;height:1px;background:#e1e1e1"></div>
<div class="abs" style="left:0;top:59px;width:25px;height:1px;background:#4a4a4a"></div>
<div class="rh" style="top:60px">3</div>
<div class="abs" style="left:25px;top:79px;width:1353px;height:1px;background:#e1e1e1"></div>
<div class="abs" style="left:0;top:79px;width:25px;height:1px;background:#4a4a4a"></div>
<div class="rh" style="top:80px">4</div>
<div class="abs" style="left:25px;top:99px;width:1353px;height:1px;background:#e1e1e1"></div>
<div class="abs" style="left:0;top:99px;width:25px;height:1px;background:#4a4a4a"></div>
<div class="rh" style="top:100px">5</div>
<div class="abs" style="left:25px;top:119px;width:1353px;height:1px;background:#e1e1e1"></div>
<div class="abs" style="left:0;top:119px;width:25px;height:1px;background:#4a4a4a"></div>
<div class="rh" style="top:120px">6</div>
<div class="abs" style="left:25px;top:139px;width:1353px;height:1px;background:#e1e1e1"></div>
<div class="abs" style="left:0;top:139px;width:25px;height:1px;background:#4a4a4a"></div>
<div class="rh" style="top:140px">7</div>
<div class="abs" style="left:25px;top:159px;width:1353px;height:1px;background:#e1e1e1"></div>
<div class="abs" style="left:0;top:159px;width:25px;height:1px;background:#4a4a4a"></div>
<div class="rh" style="top:160px">8</div>
<div class="abs" style="left:25px;top:179px;width:1353px;height:1px;background:#e1e1e1"></div>
<div class="abs" style="left:0;top:179px;width:25px;height:1px;background:#4a4a4a"></div>
<div class="rh" style="top:180px">9</div>
<div class="abs" style="left:25px;top:199px;width:1353px;height:1px;background:#e1e1e1"></div>
<div class="abs" style="left:0;top:199px;width:25px;height:1px;background:#4a4a4a"></div>
<div class="rh" style="top:200px">10</div>
<div class="abs" style="left:25px;top:219px;width:1353px;height:1px;background:#e1e1e1"></div>
<div class="abs" style="left:0;top:219px;width:25px;height:1px;background:#4a4a4a"></div>
<div class="rh" style="top:220px">11</div>
<div class="abs" style="left:25px;top:239px;width:1353px;height:1px;background:#e1e1e1"></div>
<div class="abs" style="left:0;top:239px;width:25px;height:1px;background:#4a4a4a"></div>
<div class="rh" style="top:240px">12</div>
<div class="abs" style="left:25px;top:259px;width:1353px;height:1px;background:#e1e1e1"></div>
<div class="abs" style="left:0;top:259px;width:25px;height:1px;background:#4a4a4a"></div>
<div class="rh" style="top:260px">13</div>
<div class="abs" style="left:25px;top:279px;width:1353px;height:1px;background:#e1e1e1"></div>
<div class="abs" style="left:0;top:279px;width:25px;height:1px;background:#4a4a4a"></div>
<div class="rh" style="top:280px">14</div>
<div class="abs" style="left:25px;top:299px;width:1353px;height:1px;background:#e1e1e1"></div>
<div class="abs" style="left:0;top:299px;width:25px;height:1px;background:#4a4a4a"></div>
<div class="rh" style="top:300px">15</div>
<div class="abs" style="left:25px;top:319px;width:1353px;height:1px;background:#e1e1e1"></div>
<div class="abs" style="left:0;top:319px;width:25px;height:1px;background:#4a4a4a"></div>
<div class="rh" style="top:320px">16</div>
<div class="abs" style="left:25px;top:339px;width:1353px;height:1px;background:#e1e1e1"></div>
<div class="abs" style="left:0;top:339px;width:25px;height:1px;background:#4a4a4a"></div>
<div class="rh" style="top:340px">17</div>
<div class="abs" style="left:25px;top:359px;width:1353px;height:1px;background:#e1e1e1"></div>
<div class="abs" style="left:0;top:359px;width:25px;height:1px;background:#4a4a4a"></div>
<div class="rh" style="top:360px">18</div>
<div class="abs" style="left:25px;top:379px;width:1353px;height:1px;background:#e1e1e1"></div>
<div class="abs" style="left:0;top:379px;width:25px;height:1px;background:#4a4a4a"></div>
<div class="rh" style="top:380px">19</div>
<div class="abs" style="left:25px;top:399px;width:1353px;height:1px;background:#e1e1e1"></div>
<div class="abs" style="left:0;top:399px;width:25px;height:1px;background:#4a4a4a"></div>
<div class="rh" style="top:400px">20</div>
<div class="abs" style="left:25px;top:419px;width:1353px;height:1px;background:#e1e1e1"></div>
<div class="abs" style="left:0;top:419px;width:25px;height:1px;background:#4a4a4a"></div>
<div class="rh" style="top:420px">21</div>
<div class="abs" style="left:25px;top:439px;width:1353px;height:1px;background:#e1e1e1"></div>
<div class="abs" style="left:0;top:439px;width:25px;height:1px;background:#4a4a4a"></div>
<div class="rh" style="top:440px">22</div>
<div class="abs" style="left:25px;top:459px;width:1353px;height:1px;background:#e1e1e1"></div>
<div class="abs" style="left:0;top:459px;width:25px;height:1px;background:#4a4a4a"></div>
<div class="rh" style="top:460px">23</div>
<div class="abs" style="left:25px;top:479px;width:1353px;height:1px;background:#e1e1e1"></div>
<div class="abs" style="left:0;top:479px;width:25px;height:1px;background:#4a4a4a"></div>
<div class="rh" style="top:480px">24</div>
<div class="abs" style="left:25px;top:499px;width:1353px;height:1px;background:#e1e1e1"></div>
<div class="abs" style="left:0;top:499px;width:25px;height:1px;background:#4a4a4a"></div>
<div class="rh" style="top:500px">25</div>
<div class="abs" style="left:25px;top:519px;width:1353px;height:1px;background:#e1e1e1"></div>
<div class="abs" style="left:0;top:519px;width:25px;height:1px;background:#4a4a4a"></div>
<div class="rh" style="top:520px">26</div>
<div class="abs" style="left:25px;top:539px;width:1353px;height:1px;background:#e1e1e1"></div>
<div class="abs" style="left:0;top:539px;width:25px;height:1px;background:#4a4a4a"></div>
<div class="rh" style="top:540px">27</div>
<div class="abs" style="left:25px;top:559px;width:1353px;height:1px;background:#e1e1e1"></div>
<div class="abs" style="left:0;top:559px;width:25px;height:1px;background:#4a4a4a"></div>
<div class="rh" style="top:560px">28</div>
<div class="abs" style="left:25px;top:579px;width:1353px;height:1px;background:#e1e1e1"></div>
<div class="abs" style="left:0;top:579px;width:25px;height:1px;background:#4a4a4a"></div>
<div class="rh" style="top:580px">29</div>
<div class="abs" style="left:25px;top:599px;width:1353px;height:1px;background:#e1e1e1"></div>
<div class="abs" style="left:0;top:599px;width:25px;height:1px;background:#4a4a4a"></div>
<div class="rh" style="top:600px">30</div>
<div class="abs" style="left:25px;top:619px;width:1353px;height:1px;background:#e1e1e1"></div>
<div class="abs" style="left:0;top:619px;width:25px;height:1px;background:#4a4a4a"></div>
<div class="rh" style="top:620px">31</div>
<div class="abs" style="left:25px;top:639px;width:1353px;height:1px;background:#e1e1e1"></div>
<div class="abs" style="left:0;top:639px;width:25px;height:1px;background:#4a4a4a"></div>
<div class="rh" style="top:640px">32</div>
<div class="abs" style="left:25px;top:659px;width:1353px;height:1px;background:#e1e1e1"></div>
<div class="abs" style="left:0;top:659px;width:25px;height:1px;background:#4a4a4a"></div>
<div class="rh" style="top:660px">33</div>
<div class="abs" style="left:25px;top:679px;width:1353px;height:1px;background:#e1e1e1"></div>
<div class="abs" style="left:0;top:679px;width:25px;height:1px;background:#4a4a4a"></div>
<div class="rh" style="top:680px">34</div>
<div class="abs" style="left:25px;top:699px;width:1353px;height:1px;background:#e1e1e1"></div>
<div class="abs" style="left:0;top:699px;width:25px;height:1px;background:#4a4a4a"></div>
<div class="rh" style="top:700px">35</div>
<div class="abs" style="left:25px;top:719px;width:1353px;height:1px;background:#e1e1e1"></div>
<div class="abs" style="left:0;top:719px;width:25px;height:1px;background:#4a4a4a"></div>
<div class="rh" style="top:720px">36</div>
<div class="abs" style="left:25px;top:739px;width:1353px;height:1px;background:#e1e1e1"></div>
<div class="abs" style="left:0;top:739px;width:25px;height:1px;background:#4a4a4a"></div>
<div class="abs" style="left:25px;top:19px;width:282px;height:20px;background:#c0c0c0"></div>
<div class="abs" style="left:24px;top:39px;width:215px;height:1px;background:#000"></div>
<div class="abs" style="left:238px;top:19px;width:1px;height:21px;background:#000"></div>
<div class="c" style="left:25px;top:20.5px;width:214px;text-align:center;letter-spacing:0.58px">ProductDescription</div>
<div class="c" style="left:239px;top:20.5px;width:68px;text-align:center">Total Cost</div>
<div class="c" style="left:27px;top:40.5px">Apple Pie</div>
<div class="c" style="left:246px;top:40.5px">$</div>
<div class="c" style="left:240px;top:40.5px;width:59px;text-align:right">126</div>
<div class="c" style="left:27px;top:60.5px">Blueberry</div>
<div class="c" style="left:246px;top:60.5px">$</div>
<div class="c" style="left:240px;top:60.5px;width:59px;text-align:right">26</div>
<div class="c" style="left:27px;top:80.5px">Caramel</div>
<div class="c" style="left:246px;top:80.5px">$</div>
<div class="c" style="left:240px;top:80.5px;width:59px;text-align:right">20</div>
<div class="c" style="left:27px;top:100.5px">Caramel Macadamia Nut</div>
<div class="c" style="left:246px;top:100.5px">$</div>
<div class="c" style="left:240px;top:100.5px;width:59px;text-align:right">125</div>
<div class="c" style="left:27px;top:120.5px">Carmel Apple</div>
<div class="c" style="left:246px;top:120.5px">$</div>
<div class="c" style="left:240px;top:120.5px;width:59px;text-align:right">147</div>
<div class="c" style="left:27px;top:140.5px">Carmel Pecan</div>
<div class="c" style="left:246px;top:140.5px">$</div>
<div class="c" style="left:240px;top:140.5px;width:59px;text-align:right">84</div>
<div class="c" style="left:27px;top:160.5px">Carrot Cake</div>
<div class="c" style="left:246px;top:160.5px">$</div>
<div class="c" style="left:240px;top:160.5px;width:59px;text-align:right">300</div>
<div class="c" style="left:27px;top:180.5px">Chocolate Macadamia Nut</div>
<div class="c" style="left:246px;top:180.5px">$</div>
<div class="c" style="left:240px;top:180.5px;width:59px;text-align:right">21</div>
<div class="c" style="left:27px;top:200.5px">Chocolate Pecan</div>
<div class="c" style="left:246px;top:200.5px">$</div>
<div class="c" style="left:240px;top:200.5px;width:59px;text-align:right">60</div>
<div class="c" style="left:27px;top:220.5px">Coconut Pineapple</div>
<div class="c" style="left:246px;top:220.5px">$</div>
<div class="c" style="left:240px;top:220.5px;width:59px;text-align:right">105</div>
<div class="c" style="left:27px;top:240.5px">Fat Free Muffins</div>
<div class="c" style="left:246px;top:240.5px">$</div>
<div class="c" style="left:240px;top:240.5px;width:59px;text-align:right">200</div>
<div class="c" style="left:27px;top:260.5px">Fudge Cake</div>
<div class="c" style="left:246px;top:260.5px">$</div>
<div class="c" style="left:240px;top:260.5px;width:59px;text-align:right">180</div>
<div class="c" style="left:27px;top:280.5px">German Chocolate</div>
<div class="c" style="left:246px;top:280.5px">$</div>
<div class="c" style="left:240px;top:280.5px;width:59px;text-align:right">16</div>
<div class="c" style="left:27px;top:300.5px">Irish Cream</div>
<div class="c" style="left:246px;top:300.5px">$</div>
<div class="c" style="left:240px;top:300.5px;width:59px;text-align:right">150</div>
<div class="c" style="left:27px;top:320.5px">Lemon</div>
<div class="c" style="left:246px;top:320.5px">$</div>
<div class="c" style="left:240px;top:320.5px;width:59px;text-align:right">60</div>
<div class="c" style="left:27px;top:340.5px">Pineapple</div>
<div class="c" style="left:246px;top:340.5px">$</div>
<div class="c" style="left:240px;top:340.5px;width:59px;text-align:right">203</div>
<div class="c" style="left:27px;top:360.5px">Pound Cakes</div>
<div class="c" style="left:246px;top:360.5px">$</div>
<div class="c" style="left:240px;top:360.5px;width:59px;text-align:right">360</div>
<div class="c" style="left:27px;top:380.5px">Regular Muffins</div>
<div class="c" style="left:246px;top:380.5px">$</div>
<div class="c" style="left:240px;top:380.5px;width:59px;text-align:right">60</div>
<div class="c" style="left:27px;top:400.5px">Rocky Road</div>
<div class="c" style="left:246px;top:400.5px">$</div>
<div class="c" style="left:240px;top:400.5px;width:59px;text-align:right">60</div>
<div class="c" style="left:27px;top:420.5px">Small Carrot Cake</div>
<div class="c" style="left:246px;top:420.5px">$</div>
<div class="c" style="left:240px;top:420.5px;width:59px;text-align:right">360</div>
<div class="c" style="left:27px;top:440.5px">Small German Chocolate</div>
<div class="c" style="left:246px;top:440.5px">$</div>
<div class="c" style="left:240px;top:440.5px;width:59px;text-align:right">182</div>
<div class="c" style="left:27px;top:460.5px">Snickers</div>
<div class="c" style="left:246px;top:460.5px">$</div>
<div class="c" style="left:240px;top:460.5px;width:59px;text-align:right">225</div>
<div class="c" style="left:27px;top:480.5px">White Chocolate</div>
<div class="c" style="left:246px;top:480.5px">$</div>
<div class="c" style="left:240px;top:480.5px;width:59px;text-align:right">52</div>
<div class="c" style="left:27px;top:500.5px">White Chocolate Macadamia Nut</div>
<div class="c" style="left:246px;top:500.5px">$</div>
<div class="c" style="left:240px;top:500.5px;width:59px;text-align:right">26</div>
<div class="c" style="left:27px;top:520.5px">White Chocolate Raspberry</div>
<div class="c" style="left:246px;top:520.5px">$</div>
<div class="c" style="left:240px;top:520.5px;width:59px;text-align:right">126</div>
<svg style="left:0;top:-218px" width="1378" height="1049" viewBox="0 0 1378 1049" font-family="Liberation Sans, sans-serif">
<rect x="309.5" y="237.5" width="638" height="442" fill="#fff" stroke="#d9d9d9" stroke-width="1"/>
<text x="628" y="263.2" font-size="17" fill="#595959" text-anchor="middle">Chart Title</text>
<line x1="360.5" x2="895.0" y1="281.50" y2="281.50" stroke="#d9d9d9" stroke-width="1"/>
<text x="352.5" y="285.70" font-size="10.8" fill="#595959" text-anchor="end">$400</text>
<line x1="360.5" x2="895.0" y1="312.60" y2="312.60" stroke="#d9d9d9" stroke-width="1"/>
<text x="352.5" y="316.80" font-size="10.8" fill="#595959" text-anchor="end">$350</text>
<line x1="360.5" x2="895.0" y1="343.70" y2="343.70" stroke="#d9d9d9" stroke-width="1"/>
<text x="352.5" y="347.90" font-size="10.8" fill="#595959" text-anchor="end">$300</text>
<line x1="360.5" x2="895.0" y1="374.80" y2="374.80" stroke="#d9d9d9" stroke-width="1"/>
<text x="352.5" y="379.00" font-size="10.8" fill="#595959" text-anchor="end">$250</text>
<line x1="360.5" x2="895.0" y1="405.90" y2="405.90" stroke="#d9d9d9" stroke-width="1"/>
<text x="352.5" y="410.10" font-size="10.8" fill="#595959" text-anchor="end">$200</text>
<line x1="360.5" x2="895.0" y1="437.00" y2="437.00" stroke="#d9d9d9" stroke-width="1"/>
<text x="352.5" y="441.20" font-size="10.8" fill="#595959" text-anchor="end">$150</text>
<line x1="360.5" x2="895.0" y1="468.10" y2="468.10" stroke="#d9d9d9" stroke-width="1"/>
<text x="352.5" y="472.30" font-size="10.8" fill="#595959" text-anchor="end">$100</text>
<line x1="360.5" x2="895.0" y1="499.20" y2="499.20" stroke="#d9d9d9" stroke-width="1"/>
<text x="352.5" y="503.40" font-size="10.8" fill="#595959" text-anchor="end">$50</text>
<line x1="360.5" x2="895.0" y1="530.30" y2="530.30" stroke="#d9d9d9" stroke-width="1"/>
<text x="352.5" y="534.50" font-size="10.8" fill="#595959" text-anchor="end">$-</text>
<text x="905.5" y="285.70" font-size="10.8" fill="#595959" letter-spacing="-0.3">100%</text>
<text x="905.5" y="310.58" font-size="10.8" fill="#595959" letter-spacing="-0.3">90%</text>
<text x="905.5" y="335.46" font-size="10.8" fill="#595959" letter-spacing="-0.3">80%</text>
<text x="905.5" y="360.34" font-size="10.8" fill="#595959" letter-spacing="-0.3">70%</text>
<text x="905.5" y="385.22" font-size="10.8" fill="#595959" letter-spacing="-0.3">60%</text>
<text x="905.5" y="410.10" font-size="10.8" fill="#595959" letter-spacing="-0.3">50%</text>
<text x="905.5" y="434.98" font-size="10.8" fill="#595959" letter-spacing="-0.3">40%</text>
<text x="905.5" y="459.86" font-size="10.8" fill="#595959" letter-spacing="-0.3">30%</text>
<text x="905.5" y="484.74" font-size="10.8" fill="#595959" letter-spacing="-0.3">20%</text>
<text x="905.5" y="509.62" font-size="10.8" fill="#595959" letter-spacing="-0.3">10%</text>
<text x="905.5" y="534.50" font-size="10.8" fill="#595959" letter-spacing="-0.3">0%</text>
<line x1="360.5" x2="360.5" y1="281.5" y2="530.3" stroke="#d9d9d9" stroke-width="1"/>
<rect x="361.20" y="306.38" width="20.18" height="223.92" fill="#4472c4"/>
<text transform="translate(375.79 600.2) rotate(-90)" font-size="10.8" fill="#595959" textLength="60.8" lengthAdjust="spacing">Pound Cakes</text>
<rect x="382.58" y="306.38" width="20.18" height="223.92" fill="#4472c4"/>
<text transform="translate(397.17 624.7) rotate(-90)" font-size="10.8" fill="#595959" textLength="85.3" lengthAdjust="spacing">Small Carrot Cake</text>
<rect x="403.96" y="343.70" width="20.18" height="186.60" fill="#4472c4"/>
<text transform="translate(418.55 595.0) rotate(-90)" font-size="10.8" fill="#595959" textLength="55.6" lengthAdjust="spacing">Carrot Cake</text>
<rect x="425.34" y="390.35" width="20.18" height="139.95" fill="#4472c4"/>
<text transform="translate(439.93 578.3) rotate(-90)" font-size="10.8" fill="#595959" textLength="38.9" lengthAdjust="spacing">Snickers</text>
<rect x="446.72" y="404.03" width="20.18" height="126.27" fill="#4472c4"/>
<text transform="translate(461.31 587.0) rotate(-90)" font-size="10.8" fill="#595959" textLength="47.6" lengthAdjust="spacing">Pineapple</text>
<rect x="468.10" y="405.90" width="20.18" height="124.40" fill="#4472c4"/>
<text transform="translate(482.69 617.9) rotate(-90)" font-size="10.8" fill="#595959" textLength="78.5" lengthAdjust="spacing">Fat Free Muffins</text>
<rect x="489.48" y="417.10" width="20.18" height="113.20" fill="#4472c4"/>
<text transform="translate(504.07 659.0) rotate(-90)" font-size="10.8" fill="#595959" textLength="119.6" lengthAdjust="spacing">Small German Chocolate</text>
<rect x="510.86" y="418.34" width="20.18" height="111.96" fill="#4472c4"/>
<text transform="translate(525.45 593.8) rotate(-90)" font-size="10.8" fill="#595959" textLength="54.4" lengthAdjust="spacing">Fudge Cake</text>
<rect x="532.24" y="437.00" width="20.18" height="93.30" fill="#4472c4"/>
<text transform="translate(546.83 593.8) rotate(-90)" font-size="10.8" fill="#595959" textLength="54.4" lengthAdjust="spacing">Irish Cream</text>
<rect x="553.62" y="438.87" width="20.18" height="91.43" fill="#4472c4"/>
<text transform="translate(568.21 604.1) rotate(-90)" font-size="10.8" fill="#595959" textLength="64.7" lengthAdjust="spacing">Carmel Apple</text>
<rect x="575.00" y="451.93" width="20.18" height="78.37" fill="#4472c4"/>
<text transform="translate(589.59 584.2) rotate(-90)" font-size="10.8" fill="#595959" textLength="44.8" lengthAdjust="spacing">Apple Pie</text>
<rect x="596.38" y="451.93" width="20.18" height="78.37" fill="#4472c4"/>
<text transform="translate(610.97 671.6) rotate(-90)" font-size="10.8" fill="#595959" textLength="132.2" lengthAdjust="spacing">White Chocolate Raspberry</text>
<rect x="617.76" y="452.55" width="20.18" height="77.75" fill="#4472c4"/>
<text transform="translate(632.35 659.4) rotate(-90)" font-size="10.8" fill="#595959" textLength="120" lengthAdjust="spacing">Caramel Macadamia Nut</text>
<rect x="639.14" y="464.99" width="20.18" height="65.31" fill="#4472c4"/>
<text transform="translate(653.73 630.4) rotate(-90)" font-size="10.8" fill="#595959" textLength="91" lengthAdjust="spacing">Coconut Pineapple</text>
<rect x="660.52" y="478.05" width="20.18" height="52.25" fill="#4472c4"/>
<text transform="translate(675.11 604.8) rotate(-90)" font-size="10.8" fill="#595959" textLength="65.4" lengthAdjust="spacing">Carmel Pecan</text>
<rect x="681.90" y="492.98" width="20.18" height="37.32" fill="#4472c4"/>
<text transform="translate(696.49 618.5) rotate(-90)" font-size="10.8" fill="#595959" textLength="79.1" lengthAdjust="spacing">Chocolate Pecan</text>
<rect x="703.28" y="492.98" width="20.18" height="37.32" fill="#4472c4"/>
<text transform="translate(717.87 571.4) rotate(-90)" font-size="10.8" fill="#595959" textLength="32" lengthAdjust="spacing">Lemon</text>
<rect x="724.66" y="492.98" width="20.18" height="37.32" fill="#4472c4"/>
<text transform="translate(739.25 615.6) rotate(-90)" font-size="10.8" fill="#595959" textLength="76.2" lengthAdjust="spacing">Regular Muffins</text>
<rect x="746.04" y="492.98" width="20.18" height="37.32" fill="#4472c4"/>
<text transform="translate(760.63 594.3) rotate(-90)" font-size="10.8" fill="#595959" textLength="54.9" lengthAdjust="spacing">Rocky Road</text>
<rect x="767.42" y="497.96" width="20.18" height="32.34" fill="#4472c4"/>
<text transform="translate(782.01 619.4) rotate(-90)" font-size="10.8" fill="#595959" textLength="80" lengthAdjust="spacing">White Chocolate</text>
<rect x="788.80" y="514.13" width="20.18" height="16.17" fill="#4472c4"/>
<text transform="translate(803.39 585.8) rotate(-90)" font-size="10.8" fill="#595959" textLength="46.4" lengthAdjust="spacing">Blueberry</text>
<rect x="810.18" y="514.13" width="20.18" height="16.17" fill="#4472c4"/>
<text transform="translate(824.77 649.8) rotate(-90)" font-size="10.8" fill="#595959" textLength="88.5" lengthAdjust="spacing">White Chocolate...</text>
<rect x="831.56" y="517.24" width="20.18" height="13.06" fill="#4472c4"/>
<text transform="translate(846.15 667.7) rotate(-90)" font-size="10.8" fill="#595959" textLength="128.3" lengthAdjust="spacing">Chocolate Macadamia Nut</text>
<rect x="852.94" y="517.86" width="20.18" height="12.44" fill="#4472c4"/>
<text transform="translate(867.53 578.5) rotate(-90)" font-size="10.8" fill="#595959" textLength="39.1" lengthAdjust="spacing">Caramel</text>
<rect x="874.32" y="520.35" width="20.18" height="9.95" fill="#4472c4"/>
<text transform="translate(888.91 629.5) rotate(-90)" font-size="10.8" fill="#595959" textLength="90.1" lengthAdjust="spacing">German Chocolate</text>
<polyline fill="none" stroke="#ed7d31" stroke-width="2.8" stroke-linecap="round" stroke-linejoin="round" points="371.19,502.94 392.57,475.59 413.95,452.79 435.33,435.69 456.71,420.26 478.09,405.06 499.47,391.23 520.85,377.55 542.23,366.16 563.61,354.98 584.99,345.41 606.37,335.83 627.75,326.34 649.13,318.36 670.51,311.97 691.89,307.41 713.27,302.85 734.65,298.29 756.03,293.73 777.41,289.78 798.79,287.81 820.17,285.83 841.55,284.24 862.93,282.72 884.31,281.50"/>
<line x1="607.5" y1="781" x2="605.9" y2="696" stroke="#4472c4" stroke-width="4"/>
<path d="M605.6 681.4 L613.6 696.6 L598 696.8 Z" fill="#4472c4"/>
<rect x="441.4" y="783" width="331" height="55.4" rx="1" fill="#fff" stroke="#2f5597" stroke-width="3.8"/>
<text x="451.5" y="802.1" font-size="13.2" fill="#000" textLength="294.3" lengthAdjust="spacing">Histogram is created showing your highest values</text>
<text x="451.5" y="820.2" font-size="13.2" fill="#000" textLength="194" lengthAdjust="spacing">with the run to the lowest value.</text>
</svg>
</div>
<svg style="left:0;top:0" width="1399" height="1049" viewBox="0 0 1399 1049" font-family="Liberation Sans, sans-serif">
<rect x="1378" y="218" width="21" height="733" fill="#0a0a0a"/>
<rect x="1380.5" y="219" width="18.5" height="731" fill="#1c1c1c" rx="9"/>
<path d="M1383.6 229.6 L1388.4 222.8 L1393.2 229.6 Z" fill="#9a9a9a"/>
<rect x="1384.2" y="234.6" width="8.5" height="682.5" fill="#9a9a9a" rx="4.2"/>
<path d="M1384 942.4 L1388.7 949 L1393.4 942.4 Z" fill="#9a9a9a"/>
<rect x="0" y="951" width="1399" height="28" fill="#0a0a0a"/>
<rect x="15" y="951" width="205" height="28" fill="#262626"/>
<path d="M31.4 961 V968.4 L26.6 964.7 Z" fill="#8c8c8c"/><path d="M54.6 961 V968.4 L59.4 964.7 Z" fill="#8c8c8c"/>
<rect x="99" y="951" width="64.6" height="25.4" fill="#fff"/>
<rect x="99" y="973.6" width="64.6" height="2.8" fill="#1e7145"/>
<text x="111.0" y="968.4" font-size="12.4" fill="#217346" textLength="40.0" lengthAdjust="spacing" font-weight="bold">Sheet1</text>
<circle cx="205" cy="965" r="7.6" fill="none" stroke="#fff" stroke-width="1.3"/><path d="M200.8 965 H209.2 M205 960.8 V969.2" stroke="#fff" stroke-width="1.5"/>
<rect x="839" y="961" width="2" height="2" fill="#fff"/><rect x="839" y="965.2" width="2" height="2" fill="#fff"/><rect x="839" y="969.4" width="2" height="2" fill="#fff"/>
<rect x="854.4" y="956.2" width="524.6" height="17" fill="#1c1c1c" rx="8.5"/>
<path d="M866 960 V968.8 L858.8 964.4 Z" fill="#9a9a9a"/><path d="M1368 960.4 V968.6 L1375 964.5 Z" fill="#9a9a9a"/>
<rect x="870.5" y="960" width="467.5" height="8.8" fill="#9a9a9a" rx="4.4"/>
<rect x="0" y="979" width="1399" height="22" fill="#141414"/>
<rect x="0" y="979" width="1399" height="1" fill="#333"/>
<text x="7.4" y="993.6" font-size="11.8" fill="#fff" textLength="30.2" lengthAdjust="spacing">Ready</text>
<path d="M57 984.5 H70.5 V990 M57 984.5 V995.5 H62 M57 987.5 H70.5 M59.4 990 H63 M59.4 992.6 H61.6" fill="none" stroke="#e8e8e8" stroke-width="1"/><circle cx="67" cy="993" r="3.6" fill="none" stroke="#e8e8e8" stroke-width="1"/><circle cx="67" cy="993" r="1.7" fill="#e8e8e8"/>
<circle cx="95.6" cy="985" r="1.7" fill="none" stroke="#e8e8e8" stroke-width="1"/><path d="M89.6 987.6 C92 989 99 989 101.6 987.6 M93.6 989 V992 L91 997 M97.6 989 V992 L98.6 994 M97.6 991.6 L103 997 M103 991.6 L97.6 997" fill="none" stroke="#e8e8e8" stroke-width="1.1" stroke-linecap="round"/>
<text x="107.4" y="993.6" font-size="11.8" fill="#fff" textLength="122.0" lengthAdjust="spacing">Accessibility: Investigate</text>
<rect x="1098.6" y="980" width="40.4" height="21" fill="#262626"/>
<path d="M1112.5 983.5 H1124.5 V995.5 H1112.5 Z M1116.5 983.5 V995.5 M1120.5 983.5 V995.5 M1112.5 987.5 H1124.5 M1112.5 991.5 H1124.5" fill="none" stroke="#fff" stroke-width="1.1"/>
<path d="M1152.5 983.5 H1165.5 V995.5 H1152.5 Z M1155.5 986.5 H1162.5 V992.5 H1155.5 Z M1157 988.5 H1161 M1157 990.5 H1161" fill="none" stroke="#f0f0f0" stroke-width="1.1"/>
<path d="M1192.5 983.5 H1205.5 V995.5 H1192.5 Z M1196.5 983.5 V989.5 M1192.5 989.5 H1201.5 V983.5" fill="none" stroke="#f0f0f0" stroke-width="1.1"/>
<line x1="1225.4" y1="989.5" x2="1233" y2="989.5" stroke="#e8e8e8" stroke-width="1.1" stroke-linecap="butt"/>
<line x1="1238" y1="989.5" x2="1337.6" y2="989.5" stroke="#9a9a9a" stroke-width="1" stroke-linecap="butt"/>
<rect x="1286" y="984.4" width="5" height="11.6" fill="#b4b4b4"/>
<path d="M1343 989.5 H1351 M1347 985.5 V993.5" stroke="#e8e8e8" stroke-width="1.1"/>
<text x="1364.6" y="994.0" font-size="11.8" fill="#fff" textLength="26.0" lengthAdjust="spacing">100%</text>
<rect x="0" y="1001" width="1399" height="48" fill="#1a6033"/>
<defs>
<linearGradient id="gMoon" x1="0" y1="0" x2="0.3" y2="1"><stop offset="0" stop-color="#ffc24a"/><stop offset="1" stop-color="#f0761c"/></linearGradient>
<linearGradient id="gWin" x1="0" y1="0" x2="1" y2="1"><stop offset="0" stop-color="#7ad6fb"/><stop offset="1" stop-color="#1a9bf2"/></linearGradient>
<linearGradient id="gEdge" x1="0" y1="0" x2="1" y2="1"><stop offset="0" stop-color="#2bc3d2"/><stop offset="0.5" stop-color="#1a86d8"/><stop offset="1" stop-color="#0c59a4"/></linearGradient>
<linearGradient id="gEdge2" x1="0" y1="0" x2="1" y2="0"><stop offset="0" stop-color="#35c1f1"/><stop offset="1" stop-color="#6ad86a"/></linearGradient>
<linearGradient id="gFold" x1="0" y1="0" x2="0" y2="1"><stop offset="0" stop-color="#ffe078"/><stop offset="1" stop-color="#f7b93a"/></linearGradient>
<linearGradient id="gKin" x1="0" y1="0" x2="0" y2="1"><stop offset="0" stop-color="#1580d0"/><stop offset="1" stop-color="#9fd8f6"/></linearGradient>
<linearGradient id="gM365" x1="0" y1="0" x2="1" y2="1"><stop offset="0" stop-color="#b58af0"/><stop offset="0.5" stop-color="#6a6ae0"/><stop offset="1" stop-color="#3a8ae8"/></linearGradient>
<linearGradient id="gTeams" x1="0" y1="0" x2="1" y2="1"><stop offset="0" stop-color="#8c7be0"/><stop offset="1" stop-color="#5b55b8"/></linearGradient>
<linearGradient id="gMon" x1="0" y1="0" x2="1" y2="1"><stop offset="0" stop-color="#5aa8f0"/><stop offset="1" stop-color="#1c5ec0"/></linearGradient>
</defs>
<path d="M34.6 1014 A11.6 11.6 0 1 1 20 1029.4 A11.1 11.1 0 0 0 34.6 1014 Z" fill="url(#gMoon)"/>
<text x="50.6" y="1022.0" font-size="12.6" fill="#fff" textLength="23.4" lengthAdjust="spacing">37°F</text>
<text x="50.6" y="1038.0" font-size="12.6" fill="#cdd8d0" textLength="27.0" lengthAdjust="spacing">Clear</text>
<rect x="349" y="1014" width="11" height="11" fill="url(#gWin)" rx="0.8"/>
<rect x="361" y="1014" width="11" height="11" fill="url(#gWin)" rx="0.8"/>
<rect x="349" y="1026" width="11" height="11" fill="url(#gWin)" rx="0.8"/>
<rect x="361" y="1026" width="11" height="11" fill="url(#gWin)" rx="0.8"/>
<rect x="386.4" y="1009" width="99.2" height="32" fill="#2a6d42" rx="16"/>
<circle cx="417.6" cy="1024.4" r="5" fill="none" stroke="#fff" stroke-width="1.6"/><path d="M413.8 1028.2 L409.8 1032.4" stroke="#fff" stroke-width="1.7" stroke-linecap="round"/>
<text x="428.0" y="1030.0" font-size="13" fill="#fff" textLength="35.6" lengthAdjust="spacing">Search</text>
<rect x="499" y="1020" width="18" height="15" fill="#5a5a5a" rx="1.6"/>
<rect x="505" y="1014" width="18" height="16" fill="#e6e6e6" rx="1.6"/>
<rect x="505" y="1020" width="12" height="10" fill="#b8b8b8"/>
<path d="M554 1013.6 a11.4 11.4 0 1 1 -7.4 20 l-4.4 1.6 l1.8 -4.4 a11.4 11.4 0 0 1 10 -17.2 z" fill="url(#gTeams)"/>
<rect x="547.6" y="1021" width="9" height="8" fill="#fff" rx="1.6"/>
<path d="M557 1024 L561 1021.6 V1028.4 L557 1026 Z" fill="#fff"/>
<rect x="592" y="1016" width="19" height="18" fill="#1490df" rx="1.5"/>
<path d="M592 1024 L601.5 1030 L611 1024 V1034 H592 Z" fill="#28a8ea"/><path d="M592 1035 H611 L601.5 1028 Z" fill="#0a64b8" opacity="0.75"/>
<rect x="587" y="1019" width="11.4" height="12" fill="#0f6cbd" rx="1.2"/>
<ellipse cx="592.7" cy="1025" rx="2.7" ry="3.2" fill="none" stroke="#fff" stroke-width="1.5"/>
<circle cx="608" cy="1015" r="7.6" fill="#52c3f5"/>
<path d="M603.6 1012.2 H612.4 V1018 H603.6 Z M603.6 1012.4 L608 1015.6 L612.4 1012.4" fill="none" stroke="#0a0a0a" stroke-width="1"/>
<path d="M631 1016.4 a1.4 1.4 0 0 1 1.4 -1.4 h7 l2.4 2.4 h11.8 a1.4 1.4 0 0 1 1.4 1.4 v15.8 a1.4 1.4 0 0 1 -1.4 1.4 h-21.2 a1.4 1.4 0 0 1 -1.4 -1.4 z" fill="#e9a63a"/>
<rect x="631" y="1018.6" width="24" height="17.4" fill="url(#gFold)" rx="1.4"/>
<rect x="636" y="1028.4" width="14" height="7.6" fill="#1b8ad8" rx="1.2"/>
<rect x="639.4" y="1031.4" width="7.2" height="1.5" fill="#0f5fa8" rx="0.7"/>
<circle cx="687" cy="1025" r="12" fill="url(#gEdge)"/>
<path d="M675.4 1022 C677 1015 684 1012.6 690 1013.4 C696 1014.4 699.4 1019.4 699 1025 C697 1021 692 1018.6 687.6 1019.6 C682.4 1020.8 680.6 1025 681.4 1029 C678 1028 675 1025.4 675.4 1022 Z" fill="url(#gEdge2)"/>
<path d="M687 1027.6 C688 1031 692 1033 697.4 1030.6 C694 1036.4 686 1038 681.6 1033 C679.6 1030.6 680 1026 683.4 1024 C685.6 1022.8 688.4 1023.6 688.6 1025.4 C688.4 1026.6 687.4 1026.8 687 1027.6 Z" fill="#0c4f9a"/>
<path d="M725.4 1018 V1016 a2 2 0 0 1 2 -2 h6.4 a2 2 0 0 1 2 2 V1018" fill="none" stroke="#2aa0ea" stroke-width="1.8"/>
<rect x="719" y="1017.6" width="23" height="19.4" fill="#f4f4f4" rx="2.6"/>
<rect x="726" y="1022.6" width="4" height="4" fill="#f25022"/>
<rect x="731" y="1022.6" width="4" height="4" fill="#7fba00"/>
<rect x="726" y="1027.6" width="4" height="4" fill="#00a4ef"/>
<rect x="731" y="1027.6" width="4" height="4" fill="#ffb900"/>
<path d="M775 1014 L784.6 1019.4 V1030.6 L775 1036 L765.4 1030.6 V1019.4 Z" fill="url(#gM365)"/>
<path d="M775 1020 L779.6 1022.6 V1027.6 L775 1030.2 L770.4 1027.6 V1022.6 Z" fill="#1a6033"/>
<path d="M765.4 1019.4 L775 1014 L775 1020 L770.4 1022.6 V1027.6 L765.4 1030.6 Z" fill="#c79af4" opacity="0.85"/>
<rect x="833" y="1005" width="6" height="40" fill="#4a2626" rx="3"/>
<rect x="799" y="1005" width="36" height="40" fill="#452525" rx="4"/>
<rect x="813" y="1014" width="18" height="22" fill="#41a5ee" rx="1.4"/>
<rect x="813" y="1019.5" width="18" height="5.5" fill="#2b7cd3"/>
<rect x="813" y="1025" width="18" height="5.5" fill="#185abd"/>
<rect x="813" y="1030.5" width="18" height="5.5" fill="#103f91"/>
<rect x="807" y="1019" width="12" height="12" fill="#185abd" rx="1.2"/>
<path d="M809 1021.6 L810.8 1028.4 L813 1022.6 L815.2 1028.4 L817 1021.6" fill="none" stroke="#fff" stroke-width="1.4" stroke-linejoin="round"/>
<rect x="815.6" y="1041.4" width="6" height="2.8" fill="#f28a98" rx="1.4"/>
<circle cx="865" cy="1024" r="11" fill="#ed6c47"/><path d="M865 1013 A11 11 0 0 1 876 1024 H865 Z" fill="#ff8f6b"/><path d="M854 1024 A11 11 0 0 0 876 1024 Z" fill="#d35230"/>
<rect x="851" y="1019" width="11.4" height="12" fill="#c43e1c" rx="1.2"/>
<path d="M854.8 1029 V1021.4 H857.4 a2.3 2.3 0 0 1 0 4.6 H854.8" fill="none" stroke="#fff" stroke-width="1.5"/>
<rect x="895" y="1013" width="24" height="24" fill="url(#gKin)" rx="2"/>
<path d="M895 1037 V1033.6 C898 1031.6 901 1032.6 904 1031.6 C909 1031.6 914 1033.6 919 1033 V1037 Z" fill="#0a0a0a"/>
<circle cx="904.4" cy="1018" r="2.4" fill="#0a0a0a"/><path d="M902 1021 C900 1023 899.4 1028 899.6 1032.6 L909 1033 L906.4 1028 L910 1025.4 L909 1024 L906 1025.4 L905.6 1021.4 Z" fill="#0a0a0a"/><path d="M909.4 1025 L912.4 1019.6 L913.8 1020.4 L911 1025.8 Z" fill="#0a0a0a"/>
<rect x="931" y="1005" width="40" height="40" fill="#2e7548" rx="4"/>
<rect x="938.6" y="1013" width="18.4" height="18" fill="#f2f2f2" rx="2.4"/>
<rect x="942" y="1016.4" width="11.4" height="11.4" fill="none" stroke="#d12a1e" stroke-width="2.2" stroke-dasharray="2.6 1.6"/>
<rect x="949" y="1024" width="8" height="7.4" fill="#f2f2f2"/>
<path d="M951 1022 V1031.6 H960.6 M951 1031.6 L957 1025.6" fill="none" stroke="#9a9a9a" stroke-width="1.6"/>
<circle cx="960.6" cy="1026.6" r="2.2" fill="none" stroke="#2a9ae8" stroke-width="1.4"/><circle cx="953" cy="1034.4" r="2.2" fill="none" stroke="#2a9ae8" stroke-width="1.4"/>
<rect x="943" y="1041.4" width="15.6" height="3" fill="#3ee089" rx="1.5"/>
<rect x="989" y="1014" width="18" height="18" fill="#21a366" rx="1.4"/>
<rect x="998" y="1014" width="9" height="6" fill="#33c481"/>
<rect x="989" y="1020" width="9" height="6" fill="#107c41"/>
<rect x="998" y="1020" width="9" height="6" fill="#21a366"/>
<rect x="989" y="1026" width="18" height="6" fill="#185c37"/>
<rect x="998" y="1026" width="9" height="6" fill="#107c41"/>
<rect x="983" y="1019" width="12" height="12" fill="#107c41" rx="1.2"/>
<path d="M986.4 1021.8 L991.6 1028.4 M991.6 1021.8 L986.4 1028.4" stroke="#fff" stroke-width="1.6"/>
<rect x="1031" y="1013.6" width="18" height="14" fill="url(#gMon)" rx="1"/>
<rect x="1027.4" y="1016.6" width="16" height="5" fill="#2f6fd0"/>
<path d="M1028.6 1018 H1042.6 M1028.6 1020 H1042.6" stroke="#bfe0ff" stroke-width="0.9" stroke-dasharray="1.4 0.8"/>
<path d="M1033 1027.6 L1049 1027.6 L1050 1015 L1049 1013.6" fill="none" stroke="#cfd8e4" stroke-width="1.4"/>
<path d="M1037 1028.6 H1043 L1044 1032.6 H1036 Z" fill="#c8ccd2"/><ellipse cx="1040" cy="1034" rx="7.4" ry="2.2" fill="#e4e6ea"/>
<rect x="596" y="1041.6" width="6" height="2.6" fill="#9fb3a6" rx="1.3"/>
<rect x="640" y="1041.6" width="6" height="2.6" fill="#9fb3a6" rx="1.3"/>
<rect x="684" y="1041.6" width="6" height="2.6" fill="#9fb3a6" rx="1.3"/>
<rect x="860" y="1041.6" width="6" height="2.6" fill="#9fb3a6" rx="1.3"/>
<rect x="904" y="1041.6" width="6" height="2.6" fill="#9fb3a6" rx="1.3"/>
<rect x="992" y="1041.6" width="6" height="2.6" fill="#9fb3a6" rx="1.3"/>
<rect x="1036" y="1041.6" width="6" height="2.6" fill="#9fb3a6" rx="1.3"/>
<path d="M1173.4 1028 L1179 1022.2 L1184.6 1028" fill="none" stroke="#fff" stroke-width="1.3" stroke-linecap="round" stroke-linejoin="round"/>
<path d="M1199 1030 a3.6 3.6 0 0 1 -0.4 -7.2 a5 5 0 0 1 9.2 -1.4 a4.4 4.4 0 0 1 0.6 8.6 z" fill="#e8ece8"/><path d="M1196 1026.6 L1206.6 1021.4" stroke="#1a6033" stroke-width="0.8" opacity="0.5"/>
<path d="M1224.6 1023 a9.4 9.4 0 0 1 13.4 0" fill="none" stroke="#4f8a64" stroke-width="1.3" stroke-linecap="round"/><path d="M1227 1025.6 a6 6 0 0 1 8.6 0" fill="none" stroke="#fff" stroke-width="1.3" stroke-linecap="round"/><path d="M1229.2 1027.8 a3 3 0 0 1 4.2 0" fill="none" stroke="#fff" stroke-width="1.3" stroke-linecap="round"/><circle cx="1231.3" cy="1029.6" r="1" fill="#fff"/>
<path d="M1247.4 1022.4 H1250 L1253.6 1019.2 V1030.8 L1250 1027.6 H1247.4 Z" fill="none" stroke="#fff" stroke-width="1.2" stroke-linejoin="round"/><path d="M1256 1022.4 a3.4 3.4 0 0 1 0 5.2 M1258.2 1020.2 a6.4 6.4 0 0 1 0 9.6 M1260.4 1018.2 a9.4 9.4 0 0 1 0 13.6" fill="none" stroke="#fff" stroke-width="1.1" stroke-linecap="round"/>
<rect x="1275" y="1021" width="10" height="8" fill="none" stroke="#fff" stroke-width="1.2" rx="1.6"/>
<rect x="1285.4" y="1023.4" width="1.4" height="3.2" fill="#fff"/>
<rect x="1276.6" y="1022.6" width="6.8" height="4.8" fill="#fff" rx="0.6"/>
<path d="M1271.4 1019.2 V1021 M1274 1019.2 V1021 M1270.6 1021 H1274.8 V1023.4 a2.1 2.1 0 0 1 -4.2 0 Z M1272.7 1025.4 V1028.6 H1275" fill="#fff" stroke="#fff" stroke-width="0.9"/>
<text x="1308.0" y="1021.0" font-size="12.4" fill="#fff" textLength="47.0" lengthAdjust="spacing">10:38 PM</text>
<text x="1302.4" y="1037.0" font-size="12.4" fill="#fff" textLength="52.6" lengthAdjust="spacing">2/12/2023</text>
<circle cx="1370.6" cy="1025.4" r="10" fill="#34e98c"/>
<text x="1365" y="1029.4" font-size="11.6" fill="#0a0a0a" textLength="11.2" lengthAdjust="spacingAndGlyphs">17</text>

</svg>
</body>
</html>
